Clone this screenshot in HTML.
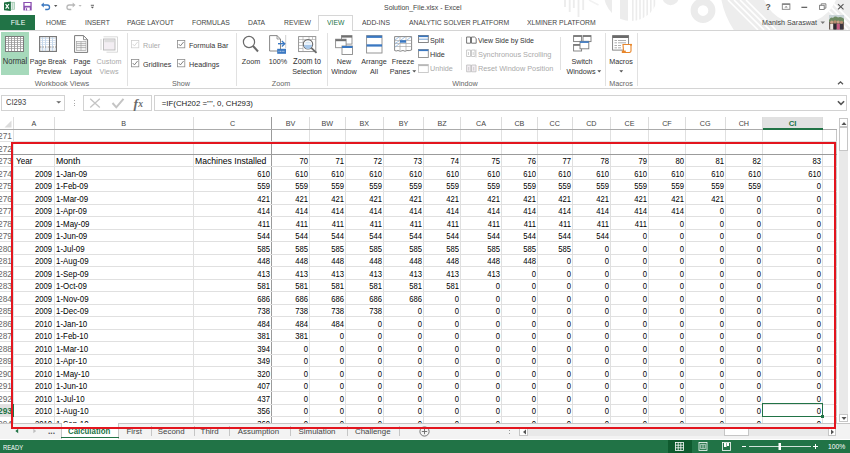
<!DOCTYPE html>
<html><head><meta charset="utf-8"><style>
html,body{margin:0;padding:0;}
body{width:850px;height:453px;position:relative;overflow:hidden;background:#fff;font-family:"Liberation Sans", sans-serif;}
body>div,body>svg{position:absolute;}
</style></head><body>
<svg style="left:0;top:0" width="850" height="30.5" viewBox="0 0 850 30.5">
<g fill="#ececec">
<rect x="564.1" y="0" width="1.8" height="7"/><rect x="568.8" y="0" width="1.8" height="12"/><rect x="572.9" y="0" width="1.8" height="8"/>
<rect x="577.6" y="0" width="1.8" height="17"/><rect x="582.3" y="0" width="1.8" height="10"/>
<circle cx="670.6" cy="-3" r="8.2"/>
</g>
<path d="M589 0 L598.5 5" stroke="#f2f2f2" stroke-width="1.5"/>
<clipPath id="sc"><circle cx="631" cy="-6" r="27"/></clipPath>
<g clip-path="url(#sc)" fill="#ececec">
<rect x="604" y="0" width="8" height="30"/><rect x="620" y="0" width="8" height="30"/>
<rect x="632" y="0" width="1.6" height="30"/><rect x="635.6" y="0" width="1.6" height="30"/><rect x="639.2" y="0" width="1.6" height="30"/><rect x="642.8" y="0" width="1.6" height="30"/><rect x="646.4" y="0" width="1.6" height="30"/><rect x="650" y="0" width="1.6" height="30"/><rect x="653.6" y="0" width="1.6" height="30"/>
</g>
<circle cx="703" cy="10.6" r="8.85" fill="none" stroke="#ebebeb" stroke-width="7.1"/>
<clipPath id="bc"><path d="M880 -15 A80 80 0 1 0 720 -15 A80 80 0 1 0 880 -15 Z M839 -15 A39 39 0 1 1 761 -15 A39 39 0 1 1 839 -15 Z" fill-rule="evenodd"/></clipPath>
<g clip-path="url(#bc)">
<rect x="700" y="0" width="150" height="31" fill="#ededed"/>
<g stroke="#fff" stroke-width="1.6">
<line x1="728" y1="0" x2="758" y2="30"/><line x1="734" y1="0" x2="764" y2="30"/><line x1="740" y1="0" x2="770" y2="30"/><line x1="746" y1="0" x2="776" y2="30"/>
<line x1="818" y1="0" x2="848" y2="30"/><line x1="824" y1="0" x2="854" y2="30"/><line x1="830" y1="0" x2="860" y2="30"/>
</g>
</g>
</svg>
<svg style="left:0;top:0" width="36" height="14" viewBox="0 0 36 14">
<path d="M9.5 1.9 H14.8 V9.7 H9.5 Z" fill="#9cc7ad"/>
<rect x="11.3" y="2.6" width="1" height="6.5" fill="#fff"/><rect x="13.2" y="2.6" width="0.8" height="6.5" fill="#e8f2ec"/>
<path d="M4 2.6 L10.8 1.6 V11.1 L4 10.2 Z" fill="#1d6e3f"/>
<path d="M5.6 4 L8.9 8.6 M8.9 4 L5.6 8.6" stroke="#fff" stroke-width="1.2"/>
<rect x="23.3" y="2" width="8.4" height="8.4" fill="#8a4fb0"/>
<rect x="24.6" y="3" width="5.8" height="2.8" fill="#fff"/>
<rect x="25.2" y="7.5" width="4.6" height="2.9" fill="#fff"/>
<rect x="26" y="8.2" width="1.1" height="2.2" fill="#8a4fb0"/>
</svg>
<svg style="left:0;top:0" width="100" height="14" viewBox="0 0 100 14">
<path d="M43.2 5 H47.3 A2.25 2.25 0 0 1 47.3 9.5 H45.2" fill="none" stroke="#3b78c0" stroke-width="1.3"/>
<path d="M41 5 L43.8 2.6 L43.8 7.4 Z" fill="#3b78c0"/>
<path d="M54 5 H57.4 L55.7 6.9 Z" fill="#555"/>
<path d="M73.3 5 H69.2 A2.25 2.25 0 0 0 69.2 9.5 H71.3" fill="none" stroke="#b8b8b8" stroke-width="1.3"/>
<path d="M75.5 5 L72.7 2.6 L72.7 7.4 Z" fill="#b8b8b8"/>
<path d="M78.5 5 H81.7 L80.1 6.8 Z" fill="#bbb"/>
<rect x="90.8" y="4.8" width="3.2" height="0.9" fill="#555"/><path d="M90.8 6.8 H94 L92.4 8.6 Z" fill="#555"/>
</svg>
<div style="left:384.4px;top:3.6px;font-size:7.5px;line-height:8.4px;color:#444;white-space:pre;transform:scaleX(0.93);transform-origin:0 50%">Solution_File.xlsx - Excel</div>
<svg style="left:760px;top:0" width="90" height="14" viewBox="760 0 90 14">
<text x="765.6" y="9.6" font-family="Liberation Sans" font-weight="bold" font-size="8.6" fill="#555">?</text>
<rect x="782.3" y="3.9" width="7.6" height="5.4" fill="none" stroke="#808080" stroke-width="0.9"/><rect x="782.3" y="3.6" width="7.6" height="1.3" fill="#808080"/>
<path d="M784.4 7.6 L786.1 5.9 L787.8 7.6Z" fill="#808080"/>
<rect x="801.4" y="6.7" width="5.8" height="1.3" fill="#666"/>
<rect x="819.6" y="5.3" width="4.6" height="4.2" fill="none" stroke="#777" stroke-width="0.9"/><path d="M821.2 5.3 V3.8 H825.9 V8.2 H824.2" fill="none" stroke="#777" stroke-width="0.9"/>
<path d="M838 4.2 L843.5 9.4 M843.5 4.2 L838 9.4" stroke="#555" stroke-width="1.1"/>
</svg>
<div style="left:0px;top:15px;width:35px;height:15.5px;background:#217346"></div>
<div style="left:-82.5px;top:14.8px;width:200px;text-align:center;font-size:7.6px;line-height:15.5px;color:#fff;white-space:pre;transform:scaleX(0.9)">FILE</div>
<div style="left:45.6px;top:15.4px;font-size:7.6px;line-height:15px;color:#444;white-space:pre;transform:scaleX(0.895);transform-origin:0 50%">HOME</div>
<div style="left:85.4px;top:15.4px;font-size:7.6px;line-height:15px;color:#444;white-space:pre;transform:scaleX(0.895);transform-origin:0 50%">INSERT</div>
<div style="left:126.6px;top:15.4px;font-size:7.6px;line-height:15px;color:#444;white-space:pre;transform:scaleX(0.895);transform-origin:0 50%">PAGE LAYOUT</div>
<div style="left:191.6px;top:15.4px;font-size:7.6px;line-height:15px;color:#444;white-space:pre;transform:scaleX(0.895);transform-origin:0 50%">FORMULAS</div>
<div style="left:247.8px;top:15.4px;font-size:7.6px;line-height:15px;color:#444;white-space:pre;transform:scaleX(0.895);transform-origin:0 50%">DATA</div>
<div style="left:283.6px;top:15.4px;font-size:7.6px;line-height:15px;color:#444;white-space:pre;transform:scaleX(0.895);transform-origin:0 50%">REVIEW</div>
<div style="left:361.9px;top:15.4px;font-size:7.6px;line-height:15px;color:#444;white-space:pre;transform:scaleX(0.895);transform-origin:0 50%">ADD-INS</div>
<div style="left:408.8px;top:15.4px;font-size:7.6px;line-height:15px;color:#444;white-space:pre;transform:scaleX(0.895);transform-origin:0 50%">ANALYTIC SOLVER PLATFORM</div>
<div style="left:527.4px;top:15.4px;font-size:7.6px;line-height:15px;color:#444;white-space:pre;transform:scaleX(0.895);transform-origin:0 50%">XLMINER PLATFORM</div>
<div style="left:0px;top:30px;width:850px;height:1px;background:#d4d4d4"></div>
<div style="left:318.4px;top:15.2px;width:34.2px;height:15.8px;background:#fff;border:1px solid #d6d6d6;border-bottom:none;box-sizing:border-box"></div>
<div style="left:326.6px;top:15.4px;font-size:7.6px;line-height:15px;color:#217346;white-space:pre;transform:scaleX(0.895);transform-origin:0 50%">VIEW</div>
<div style="left:762px;top:16px;font-size:7.17px;line-height:14px;color:#444;white-space:pre;">Manish Saraswat</div>
<svg style="left:820px;top:21px" width="6" height="4" viewBox="0 0 6 4"><path d="M0.5 0.5H5L2.75 3Z" fill="#777"/></svg>
<svg style="left:828.7px;top:15.1px" width="15.2" height="14.5" viewBox="0 0 15.2 14.5">
<rect width="15.2" height="14.5" fill="#c9d3d6"/>
<path d="M0 5 Q2 1.5 4 3 Q6 0.5 9 2.5 Q12 1 15.2 4 V8 H0Z" fill="#6f8a63"/>
<rect x="0" y="7" width="15.2" height="7.5" fill="#6b5d55"/>
<circle cx="2.8" cy="7.2" r="1.6" fill="#c9a385"/><circle cx="6" cy="6.8" r="1.6" fill="#b98d6e"/><circle cx="9.2" cy="7" r="1.6" fill="#caa083"/><circle cx="12.5" cy="7.3" r="1.5" fill="#b78f72"/>
<rect x="1.2" y="9" width="3" height="5.5" fill="#ece6e2"/><rect x="4.5" y="8.8" width="3" height="5.7" fill="#2d2a30"/><rect x="7.8" y="8.8" width="3" height="5.7" fill="#c85c84"/><rect x="11" y="9" width="3" height="5.5" fill="#3b3540"/>
</svg>
<div style="left:1px;top:32.3px;width:28px;height:43px;background:#a6d9bb"></div>
<svg style="left:5px;top:36px" width="19" height="16" viewBox="0 0 19 16"><rect x="0.5" y="0.5" width="18" height="15" fill="#fff" stroke="#7a7a7a" stroke-width="1"/><line x1="3.5" y1="1" x2="3.5" y2="15" stroke="#8a8a8a" stroke-width="0.8"/><line x1="6.5" y1="1" x2="6.5" y2="15" stroke="#8a8a8a" stroke-width="0.8"/><line x1="9.5" y1="1" x2="9.5" y2="15" stroke="#8a8a8a" stroke-width="0.8"/><line x1="12.5" y1="1" x2="12.5" y2="15" stroke="#8a8a8a" stroke-width="0.8"/><line x1="15.5" y1="1" x2="15.5" y2="15" stroke="#8a8a8a" stroke-width="0.8"/><line x1="1" y1="2.5" x2="18" y2="2.5" stroke="#9a9a9a" stroke-width="0.7"/><line x1="1" y1="4.5" x2="18" y2="4.5" stroke="#9a9a9a" stroke-width="0.7"/><line x1="1" y1="6.5" x2="18" y2="6.5" stroke="#9a9a9a" stroke-width="0.7"/><line x1="1" y1="8.5" x2="18" y2="8.5" stroke="#9a9a9a" stroke-width="0.7"/><line x1="1" y1="10.5" x2="18" y2="10.5" stroke="#9a9a9a" stroke-width="0.7"/><line x1="1" y1="12.5" x2="18" y2="12.5" stroke="#9a9a9a" stroke-width="0.7"/></svg>
<svg style="left:39px;top:36px" width="18" height="16" viewBox="0 0 18 16"><rect x="0.6" y="0.6" width="16.8" height="14.8" fill="#fff" stroke="#7a7a7a" stroke-width="1.2"/><line x1="3.5" y1="1" x2="3.5" y2="15" stroke="#b8d0ea" stroke-width="0.8"/><line x1="6.5" y1="1" x2="6.5" y2="15" stroke="#b8d0ea" stroke-width="0.8"/><line x1="13.5" y1="1" x2="13.5" y2="15" stroke="#b8d0ea" stroke-width="0.8"/><line x1="1" y1="2.5" x2="17" y2="2.5" stroke="#c8d8ea" stroke-width="0.7"/><line x1="1" y1="4.5" x2="17" y2="4.5" stroke="#c8d8ea" stroke-width="0.7"/><line x1="1" y1="6.5" x2="17" y2="6.5" stroke="#c8d8ea" stroke-width="0.7"/><line x1="1" y1="8.5" x2="17" y2="8.5" stroke="#c8d8ea" stroke-width="0.7"/><line x1="1" y1="13" x2="17" y2="13" stroke="#c8d8ea" stroke-width="0.7"/><line x1="10.5" y1="1" x2="10.5" y2="15" stroke="#7a7a7a" stroke-width="1"/><line x1="1" y1="11" x2="17" y2="11" stroke="#7a7a7a" stroke-width="0.8" stroke-dasharray="1.5 1"/></svg>
<svg style="left:73.5px;top:35px" width="15" height="18" viewBox="0 0 15 18">
<path d="M0.6 0.6 H9.5 L13.6 4.7 V17.4 H0.6 Z" fill="#fff" stroke="#7a7a7a" stroke-width="1"/>
<path d="M9.5 0.6 V4.7 H13.6" fill="none" stroke="#7a7a7a" stroke-width="0.8"/>
<rect x="2.5" y="6.5" width="9.5" height="9" fill="#f0f0f0" stroke="#9a9a9a" stroke-width="0.6"/>
<path d="M7 6.5V15.5M2.5 8.5H12M2.5 10.5H12M2.5 12.5H12" stroke="#9a9a9a" stroke-width="0.6"/>
</svg>
<svg style="left:99.5px;top:35.5px" width="19" height="17" viewBox="0 0 19 17">
<rect x="3.5" y="3" width="11.5" height="11" fill="#f3eef3" stroke="#b8b8b8" stroke-width="0.9"/>
<rect x="4.5" y="4" width="9.5" height="2.2" fill="#ddd"/>
<path d="M3.5 0.8 H17.5 M17.5 0.8 V16.2 M6.5 16.2 H17.5 M1 3 V14" stroke="#cfcfcf" stroke-width="0.8" fill="none"/>
</svg>
<svg style="left:242px;top:35px" width="19" height="18" viewBox="0 0 19 18">
<circle cx="7" cy="7" r="5.6" fill="#fff" stroke="#6a6a6a" stroke-width="1.2"/>
<line x1="11" y1="11" x2="16" y2="16.5" stroke="#6a6a6a" stroke-width="2"/>
</svg>
<svg style="left:268.5px;top:35px" width="18" height="19" viewBox="0 0 18 19">
<path d="M0.6 0.6 H8 L11.5 4 V16 H0.6 Z" fill="#fff" stroke="#7a7a7a" stroke-width="0.9"/>
<path d="M8 0.6 V4 H11.5" fill="none" stroke="#7a7a7a" stroke-width="0.7"/>
<line x1="16.7" y1="0.5" x2="16.7" y2="13" stroke="#8a8a8a" stroke-width="0.8" stroke-dasharray="1 1"/>
<line x1="9" y1="8.7" x2="15" y2="8.7" stroke="#3a78c2" stroke-width="1.4"/><path d="M12.8 6 L15.8 8.7 L12.8 11.4" fill="none" stroke="#3a78c2" stroke-width="1.3"/>
<rect x="8.2" y="13.8" width="8.8" height="5" fill="#3a78c2"/>
<path d="M9.5 16.3H16" stroke="#fff" stroke-width="0.7" stroke-dasharray="1 0.6"/>
</svg>
<svg style="left:297.5px;top:36px" width="20" height="18" viewBox="0 0 20 18">
<rect x="0.6" y="0.6" width="17.2" height="15" fill="#fff" stroke="#8a8a8a" stroke-width="0.9"/>
<path d="M0.6 3.5H17.8M0.6 6.5H5M0.6 9.5H5M0.6 12.5H5M5 0.6V15.6M11 0.6V3.5M14.5 0.6V3.5" stroke="#a0a0a0" stroke-width="0.6"/>
<circle cx="10" cy="8.3" r="4.7" fill="#fff" stroke="#6a6a6a" stroke-width="1.1"/>
<path d="M5.8 8.8 A4.2 4.2 0 0 0 14.2 8.8 Z" fill="#a8c8ea"/>
<path d="M6.5 7.5 A4 4 0 0 1 13.5 7.5 Z" fill="#d6e6f4"/>
<line x1="13.3" y1="11.8" x2="18.5" y2="16.8" stroke="#6a6a6a" stroke-width="1.8"/>
</svg>
<svg style="left:335px;top:34.5px" width="19" height="20" viewBox="0 0 19 20">
<rect x="6.5" y="0.6" width="10.5" height="8.5" fill="#fff" stroke="#8a8a8a" stroke-width="0.9"/><rect x="6.5" y="0.6" width="10.5" height="2" fill="#707070"/>
<rect x="0.6" y="4.2" width="10.5" height="8.5" fill="#fff" stroke="#8a8a8a" stroke-width="0.9"/><rect x="0.6" y="4.2" width="10.5" height="2" fill="#707070"/>
<rect x="7" y="11" width="10.5" height="8.5" fill="#fff" stroke="#8a8a8a" stroke-width="0.9"/><rect x="7" y="11" width="10.5" height="2" fill="#3a78c2"/>
</svg>
<svg style="left:366px;top:34.5px" width="17" height="19" viewBox="0 0 17 19">
<rect x="0.6" y="0.6" width="15.4" height="17.4" fill="#fff" stroke="#8a8a8a" stroke-width="0.9"/>
<rect x="0.6" y="0.6" width="15.4" height="2.3" fill="#3a78c2"/>
<rect x="0.6" y="9.3" width="15.4" height="2.3" fill="#3a78c2"/>
</svg>
<svg style="left:394px;top:36px" width="19" height="17" viewBox="0 0 19 17">
<path d="M0.6 0.6 H17.6 V14 Q15 15 13 14.5 Q11 16 9 14.5 Q6 16 4 14.5 Q2 15.5 0.6 14.5 Z" fill="#fff" stroke="#7a7a7a" stroke-width="0.9"/>
<path d="M0.6 4.5H17.6M0.6 7.5H17.6M0.6 10.5H17.6M6 0.6V14.5M12 0.6V14.5" stroke="#9a9a9a" stroke-width="0.6"/>
<rect x="6" y="4.2" width="6" height="2.5" fill="#3a78c2"/>
<path d="M1 4 L5 1 M7 4 L11 1 M13 4 L17 1 M1 7.5 L5 5 M1 11 L5 8" stroke="#8ab4e0" stroke-width="0.8"/>
</svg>
<svg style="left:418px;top:35px" width="11" height="8" viewBox="0 0 11 8">
<rect x="0.5" y="0.5" width="9.8" height="7" fill="#fff" stroke="#7a7a7a" stroke-width="0.9"/><rect x="0.5" y="0.5" width="9.8" height="1.6" fill="#3a78c2"/><line x1="1" y1="4.2" x2="10" y2="4.2" stroke="#3a78c2" stroke-width="0.7"/>
</svg>
<svg style="left:418px;top:49px" width="11" height="9" viewBox="0 0 11 9">
<rect x="0.5" y="0.5" width="9.8" height="8" fill="#fff" stroke="#8a8a8a" stroke-width="0.9"/><rect x="0.5" y="0.5" width="9.8" height="1.6" fill="#3a78c2"/>
</svg>
<svg style="left:418px;top:64px" width="11" height="9" viewBox="0 0 11 9">
<rect x="0.5" y="0.5" width="9.8" height="8" fill="#fff" stroke="#c6c6c6" stroke-width="0.9"/><rect x="0.5" y="0.5" width="9.8" height="1.6" fill="#b8b8b8"/>
</svg>
<svg style="left:465.5px;top:35.5px" width="11" height="8" viewBox="0 0 11 8">
<path d="M0.6 1 H4.5 V7.2 H0.6 Z M5.5 1 H8.5 L10.2 2.5 V7.2 H5.5 Z" fill="#fff" stroke="#666" stroke-width="0.9"/>
</svg>
<svg style="left:465.5px;top:49px" width="11" height="9" viewBox="0 0 11 9">
<path d="M0.6 1 H4.5 V7.5 H0.6 Z M5.5 1 H9 V7.5 H5.5 Z" fill="#fff" stroke="#bcbcbc" stroke-width="0.8"/><path d="M10 0.5V8.5M2.5 3V6M7.2 3V6" stroke="#bcbcbc" stroke-width="0.7"/>
</svg>
<svg style="left:465.5px;top:63.5px" width="11" height="9" viewBox="0 0 11 9">
<path d="M0.6 1 H4.8 V7.8 H0.6 Z M5.5 1 H10 V7.8 H5.5 Z" fill="#f3eef3" stroke="#bcbcbc" stroke-width="0.8"/><path d="M2.7 3V6.5M7.7 3V6.5" stroke="#bcbcbc" stroke-width="0.7"/>
</svg>
<svg style="left:573px;top:35px" width="19" height="17" viewBox="0 0 19 17">
<rect x="0.6" y="0.6" width="8" height="6" fill="#fff" stroke="#7a7a7a" stroke-width="0.9"/><rect x="0.6" y="0.6" width="8" height="1.3" fill="#707070"/>
<rect x="10" y="0.6" width="8" height="6" fill="#fff" stroke="#7a7a7a" stroke-width="0.9"/><rect x="10" y="0.6" width="8" height="1.3" fill="#707070"/>
<rect x="0.6" y="9.5" width="8" height="6.5" fill="#fff" stroke="#7a7a7a" stroke-width="0.9"/><rect x="0.6" y="9.5" width="8" height="1.3" fill="#707070"/>
<rect x="7" y="6.3" width="8.8" height="7.5" fill="#fff" stroke="#7a7a7a" stroke-width="0.9"/><rect x="7" y="6.3" width="8.8" height="1.6" fill="#3a78c2"/>
</svg>
<svg style="left:611.5px;top:35px" width="21" height="18" viewBox="0 0 21 18">
<rect x="0.6" y="0.6" width="16" height="14.5" fill="#fff" stroke="#7a7a7a" stroke-width="0.9"/><rect x="0.6" y="0.6" width="16" height="2.4" fill="#6a6a6a"/>
<path d="M2.5 5.5H5M6 5.5H14M2.5 7.8H5M6 7.8H14M2.5 10.5H5M6 10.5H9M2.5 12.8H5M6 12.8H9" stroke="#9a9a9a" stroke-width="0.8"/>
<path d="M11 9.5 H19 V16 Q19 17.5 17 17.5 H10 Q11.5 17 11.5 16 Z" fill="#fff" stroke="#e8862a" stroke-width="1.1"/>
<rect x="9.8" y="15.6" width="4" height="2" fill="#e8862a"/><circle cx="19" cy="9.7" r="1" fill="#e8862a"/>
</svg>
<div style="left:0px;top:88px;width:850px;height:1px;background:#d4d4d4"></div>
<div style="left:126.5px;top:33px;width:1px;height:53px;background:#e1e1e1"></div>
<div style="left:235.6px;top:33px;width:1px;height:53px;background:#e1e1e1"></div>
<div style="left:326.7px;top:33px;width:1px;height:53px;background:#e1e1e1"></div>
<div style="left:605.2px;top:33px;width:1px;height:53px;background:#e1e1e1"></div>
<div style="left:637px;top:33px;width:1px;height:53px;background:#e1e1e1"></div>
<div style="left:461px;top:37px;width:1px;height:33px;background:#e1e1e1"></div>
<div style="left:560.4px;top:37px;width:1px;height:33px;background:#e1e1e1"></div>
<div style="left:-85.5px;top:56.7px;width:200px;text-align:center;font-size:8.208px;line-height:10px;color:#333;white-space:pre;transform:scaleX(0.926)">Normal</div>
<div style="left:-52.0px;top:56.7px;width:200px;text-align:center;font-size:7.506000000000001px;line-height:10px;color:#333;white-space:pre;transform:scaleX(0.926)">Page Break</div>
<div style="left:-51.5px;top:66.7px;width:200px;text-align:center;font-size:7.506000000000001px;line-height:10px;color:#333;white-space:pre;transform:scaleX(0.926)">Preview</div>
<div style="left:-18.5px;top:56.7px;width:200px;text-align:center;font-size:7.776000000000001px;line-height:10px;color:#333;white-space:pre;transform:scaleX(0.926)">Page</div>
<div style="left:-19.0px;top:66.7px;width:200px;text-align:center;font-size:7.776000000000001px;line-height:10px;color:#333;white-space:pre;transform:scaleX(0.926)">Layout</div>
<div style="left:8.5px;top:56.7px;width:200px;text-align:center;font-size:7.776000000000001px;line-height:10px;color:#aaa;white-space:pre;transform:scaleX(0.926)">Custom</div>
<div style="left:8.5px;top:66.7px;width:200px;text-align:center;font-size:7.776000000000001px;line-height:10px;color:#aaa;white-space:pre;transform:scaleX(0.926)">Views</div>
<div style="left:-38.3px;top:78.89999999999999px;width:200px;text-align:center;font-size:7.959600000000001px;line-height:10px;color:#666;white-space:pre;transform:scaleX(0.926)">Workbook Views</div>
<div style="left:142.6px;top:40.5px;font-size:7.74px;line-height:10px;color:#aaa;white-space:pre;transform:scaleX(0.926);transform-origin:0 50%">Ruler</div>
<div style="left:188.6px;top:40.5px;font-size:7.73px;line-height:10px;color:#333;white-space:pre;transform:scaleX(0.926);transform-origin:0 50%">Formula Bar</div>
<div style="left:142.6px;top:59.6px;font-size:7.74px;line-height:10px;color:#333;white-space:pre;transform:scaleX(0.926);transform-origin:0 50%">Gridlines</div>
<div style="left:188.6px;top:59.6px;font-size:7.74px;line-height:10px;color:#333;white-space:pre;transform:scaleX(0.926);transform-origin:0 50%">Headings</div>
<div style="left:80.80000000000001px;top:78.89999999999999px;width:200px;text-align:center;font-size:7.776000000000001px;line-height:10px;color:#666;white-space:pre;transform:scaleX(0.926)">Show</div>
<svg style="left:131px;top:40.2px" width="9" height="9" viewBox="0 0 9 9"><rect x="0.4" y="0.4" width="7.4" height="7.4" fill="#fff" stroke="#cfcfcf" stroke-width="0.8"/><path d="M1.7 4 L3.4 5.9 L6.6 2" fill="none" stroke="#cfcfcf" stroke-width="0.8"/></svg>
<svg style="left:177.3px;top:40.2px" width="9" height="9" viewBox="0 0 9 9"><rect x="0.4" y="0.4" width="7.4" height="7.4" fill="#fff" stroke="#8c8c8c" stroke-width="0.8"/><path d="M1.7 4 L3.4 5.9 L6.6 2" fill="none" stroke="#666" stroke-width="0.8"/></svg>
<svg style="left:131px;top:59.4px" width="9" height="9" viewBox="0 0 9 9"><rect x="0.4" y="0.4" width="7.4" height="7.4" fill="#fff" stroke="#8c8c8c" stroke-width="0.8"/><path d="M1.7 4 L3.4 5.9 L6.6 2" fill="none" stroke="#666" stroke-width="0.8"/></svg>
<svg style="left:177.3px;top:59.4px" width="9" height="9" viewBox="0 0 9 9"><rect x="0.4" y="0.4" width="7.4" height="7.4" fill="#fff" stroke="#8c8c8c" stroke-width="0.8"/><path d="M1.7 4 L3.4 5.9 L6.6 2" fill="none" stroke="#666" stroke-width="0.8"/></svg>
<div style="left:151.3px;top:56.7px;width:200px;text-align:center;font-size:7.776000000000001px;line-height:10px;color:#333;white-space:pre;transform:scaleX(0.926)">Zoom</div>
<div style="left:177.7px;top:56.7px;width:200px;text-align:center;font-size:7.776000000000001px;line-height:10px;color:#333;white-space:pre;transform:scaleX(0.926)">100%</div>
<div style="left:206.7px;top:56.7px;width:200px;text-align:center;font-size:8.208px;line-height:10px;color:#333;white-space:pre;transform:scaleX(0.926)">Zoom to</div>
<div style="left:206.7px;top:66.7px;width:200px;text-align:center;font-size:7.776000000000001px;line-height:10px;color:#333;white-space:pre;transform:scaleX(0.926)">Selection</div>
<div style="left:180.8px;top:78.89999999999999px;width:200px;text-align:center;font-size:7.776000000000001px;line-height:10px;color:#666;white-space:pre;transform:scaleX(0.926)">Zoom</div>
<div style="left:244.39999999999998px;top:56.7px;width:200px;text-align:center;font-size:7.776000000000001px;line-height:10px;color:#333;white-space:pre;transform:scaleX(0.926)">New</div>
<div style="left:244.2px;top:66.7px;width:200px;text-align:center;font-size:7.776000000000001px;line-height:10px;color:#333;white-space:pre;transform:scaleX(0.926)">Window</div>
<div style="left:274.0px;top:56.7px;width:200px;text-align:center;font-size:7.776000000000001px;line-height:10px;color:#333;white-space:pre;transform:scaleX(0.926)">Arrange</div>
<div style="left:274.2px;top:66.7px;width:200px;text-align:center;font-size:7.776000000000001px;line-height:10px;color:#333;white-space:pre;transform:scaleX(0.926)">All</div>
<div style="left:302.7px;top:56.7px;width:200px;text-align:center;font-size:7.776000000000001px;line-height:10px;color:#333;white-space:pre;transform:scaleX(0.926)">Freeze</div>
<div style="left:300.1px;top:66.7px;width:200px;text-align:center;font-size:7.776000000000001px;line-height:10px;color:#333;white-space:pre;transform:scaleX(0.926)">Panes</div>
<svg style="left:411.5px;top:70px" width="5" height="3" viewBox="0 0 5 3"><path d="M0.3 0.3H4.2L2.25 2.5Z" fill="#555"/></svg>
<div style="left:430.3px;top:36.1px;font-size:7.78px;line-height:10px;color:#333;white-space:pre;transform:scaleX(0.926);transform-origin:0 50%">Split</div>
<div style="left:430.3px;top:50.1px;font-size:7.78px;line-height:10px;color:#333;white-space:pre;transform:scaleX(0.926);transform-origin:0 50%">Hide</div>
<div style="left:430.3px;top:64.1px;font-size:7.78px;line-height:10px;color:#aaa;white-space:pre;transform:scaleX(0.926);transform-origin:0 50%">Unhide</div>
<div style="left:477.9px;top:36.1px;font-size:7.52px;line-height:10px;color:#333;white-space:pre;transform:scaleX(0.926);transform-origin:0 50%">View Side by Side</div>
<div style="left:477.9px;top:50.1px;font-size:7.97px;line-height:10px;color:#aaa;white-space:pre;transform:scaleX(0.926);transform-origin:0 50%">Synchronous Scrolling</div>
<div style="left:477.9px;top:64.1px;font-size:7.91px;line-height:10px;color:#aaa;white-space:pre;transform:scaleX(0.926);transform-origin:0 50%">Reset Window Position</div>
<div style="left:365.4px;top:78.89999999999999px;width:200px;text-align:center;font-size:7.776000000000001px;line-height:10px;color:#666;white-space:pre;transform:scaleX(0.926)">Window</div>
<div style="left:482.0px;top:56.7px;width:200px;text-align:center;font-size:7.776000000000001px;line-height:10px;color:#333;white-space:pre;transform:scaleX(0.926)">Switch</div>
<div style="left:480.5px;top:66.7px;width:200px;text-align:center;font-size:7.776000000000001px;line-height:10px;color:#333;white-space:pre;transform:scaleX(0.926)">Windows</div>
<svg style="left:596.5px;top:70px" width="5" height="3" viewBox="0 0 5 3"><path d="M0.3 0.3H4.2L2.25 2.5Z" fill="#555"/></svg>
<div style="left:521.2px;top:56.7px;width:200px;text-align:center;font-size:7.776000000000001px;line-height:10px;color:#333;white-space:pre;transform:scaleX(0.926)">Macros</div>
<svg style="left:618.5px;top:70px" width="5" height="3" viewBox="0 0 5 3"><path d="M0.3 0.3H4.2L2.25 2.5Z" fill="#555"/></svg>
<div style="left:521.0px;top:78.89999999999999px;width:200px;text-align:center;font-size:7.776000000000001px;line-height:10px;color:#666;white-space:pre;transform:scaleX(0.926)">Macros</div>
<svg style="left:837px;top:81px" width="7" height="4" viewBox="0 0 7 4"><path d="M1 3.3 L3.5 0.9 L6 3.3" fill="none" stroke="#555" stroke-width="1.3"/></svg>
<div style="left:1.0px;top:95.2px;width:64px;height:15.4px;border:1px solid #d2d2d2;box-sizing:border-box;background:#fff"></div>
<div style="left:5.6px;top:97.3px;font-size:8.2px;line-height:12px;color:#444;white-space:pre;transform:scaleX(0.93);transform-origin:0 50%">CI293</div>
<svg style="left:56px;top:101px" width="6" height="4" viewBox="0 0 6 4"><path d="M0.2 0.2H5.2L2.7 2.6Z" fill="#666"/></svg>
<div style="left:74px;top:100px;width:0.9px;height:1px;background:#aaa"></div>
<div style="left:74px;top:102.5px;width:0.9px;height:1px;background:#aaa"></div>
<div style="left:74px;top:105px;width:0.9px;height:1px;background:#aaa"></div>
<div style="left:83.4px;top:95.2px;width:68.4px;height:15.4px;border:1px solid #d2d2d2;box-sizing:border-box;background:#fff"></div>
<svg style="left:88px;top:95px" width="62" height="16" viewBox="0 0 62 16">
<path d="M2.2 3.8 L11.8 12.6 M11.8 3.8 L2.2 12.6" stroke="#c4c4c4" stroke-width="1.3"/>
<path d="M24.5 8 L28.3 12.3 L35.5 3.8" fill="none" stroke="#c4c4c4" stroke-width="2"/>
<text x="45.5" y="12.6" font-family="Liberation Serif" font-style="italic" font-weight="bold" font-size="13.5" fill="#6a6a6a">f</text>
<text x="50.3" y="12.4" font-family="Liberation Serif" font-style="italic" font-weight="bold" font-size="9.5" fill="#6a6a6a">x</text>
</svg>
<div style="left:154.4px;top:95.2px;width:692.3px;height:15.4px;border:1px solid #d2d2d2;box-sizing:border-box;background:#fff"></div>
<div style="left:161.7px;top:97.8px;font-size:7.87px;line-height:12px;color:#222;white-space:pre;">=IF(CH202 ="", 0, CH293)</div>
<svg style="left:837px;top:100px" width="8" height="6" viewBox="0 0 8 6"><path d="M0.9 1.3 L4 4.4 L7.1 1.3" fill="none" stroke="#555" stroke-width="1.6"/></svg>
<div style="left:0px;top:117.3px;width:836.7px;height:12.100000000000009px;background:#fff"></div>
<div style="left:762.6px;top:117.3px;width:60.10000000000002px;height:12.100000000000009px;background:#e1e1e1"></div>
<svg style="left:4px;top:120px" width="8" height="8" viewBox="0 0 8 8"><path d="M7.5 0.5 V7.5 H0.5 Z" fill="#dcdcdc"/></svg>
<div style="left:13.1px;top:117.3px;width:1px;height:12.100000000000009px;background:#dcdcdc"></div>
<div style="left:13.1px;top:129.4px;width:1px;height:293.29999999999995px;background:#e0e0e0"></div>
<div style="left:53.5px;top:117.3px;width:1px;height:12.100000000000009px;background:#dcdcdc"></div>
<div style="left:53.5px;top:129.4px;width:1px;height:293.29999999999995px;background:#e0e0e0"></div>
<div style="left:193.0px;top:117.3px;width:1px;height:12.100000000000009px;background:#dcdcdc"></div>
<div style="left:193.0px;top:129.4px;width:1px;height:293.29999999999995px;background:#e0e0e0"></div>
<div style="left:271.0px;top:117.3px;width:1px;height:12.100000000000009px;background:#dcdcdc"></div>
<div style="left:271.0px;top:129.4px;width:1px;height:293.29999999999995px;background:#e0e0e0"></div>
<div style="left:308.9px;top:117.3px;width:1px;height:12.100000000000009px;background:#dcdcdc"></div>
<div style="left:308.9px;top:129.4px;width:1px;height:293.29999999999995px;background:#e0e0e0"></div>
<div style="left:344.7px;top:117.3px;width:1px;height:12.100000000000009px;background:#dcdcdc"></div>
<div style="left:344.7px;top:129.4px;width:1px;height:293.29999999999995px;background:#e0e0e0"></div>
<div style="left:382.9px;top:117.3px;width:1px;height:12.100000000000009px;background:#dcdcdc"></div>
<div style="left:382.9px;top:129.4px;width:1px;height:293.29999999999995px;background:#e0e0e0"></div>
<div style="left:423.0px;top:117.3px;width:1px;height:12.100000000000009px;background:#dcdcdc"></div>
<div style="left:423.0px;top:129.4px;width:1px;height:293.29999999999995px;background:#e0e0e0"></div>
<div style="left:460.0px;top:117.3px;width:1px;height:12.100000000000009px;background:#dcdcdc"></div>
<div style="left:460.0px;top:129.4px;width:1px;height:293.29999999999995px;background:#e0e0e0"></div>
<div style="left:501.0px;top:117.3px;width:1px;height:12.100000000000009px;background:#dcdcdc"></div>
<div style="left:501.0px;top:129.4px;width:1px;height:293.29999999999995px;background:#e0e0e0"></div>
<div style="left:536.8px;top:117.3px;width:1px;height:12.100000000000009px;background:#dcdcdc"></div>
<div style="left:536.8px;top:129.4px;width:1px;height:293.29999999999995px;background:#e0e0e0"></div>
<div style="left:571.8px;top:117.3px;width:1px;height:12.100000000000009px;background:#dcdcdc"></div>
<div style="left:571.8px;top:129.4px;width:1px;height:293.29999999999995px;background:#e0e0e0"></div>
<div style="left:609.9px;top:117.3px;width:1px;height:12.100000000000009px;background:#dcdcdc"></div>
<div style="left:609.9px;top:129.4px;width:1px;height:293.29999999999995px;background:#e0e0e0"></div>
<div style="left:648.0px;top:117.3px;width:1px;height:12.100000000000009px;background:#dcdcdc"></div>
<div style="left:648.0px;top:129.4px;width:1px;height:293.29999999999995px;background:#e0e0e0"></div>
<div style="left:684.9px;top:117.3px;width:1px;height:12.100000000000009px;background:#dcdcdc"></div>
<div style="left:684.9px;top:129.4px;width:1px;height:293.29999999999995px;background:#e0e0e0"></div>
<div style="left:724.6px;top:117.3px;width:1px;height:12.100000000000009px;background:#dcdcdc"></div>
<div style="left:724.6px;top:129.4px;width:1px;height:293.29999999999995px;background:#e0e0e0"></div>
<div style="left:762.1px;top:117.3px;width:1px;height:12.100000000000009px;background:#dcdcdc"></div>
<div style="left:762.1px;top:129.4px;width:1px;height:293.29999999999995px;background:#e0e0e0"></div>
<div style="left:822.2px;top:117.3px;width:1px;height:12.100000000000009px;background:#dcdcdc"></div>
<div style="left:822.2px;top:129.4px;width:1px;height:293.29999999999995px;background:#e0e0e0"></div>
<div style="left:271.0px;top:117.3px;width:1px;height:305.4px;background:#9b9b9b"></div>
<div style="left:836.2px;top:129.4px;width:1px;height:293.29999999999995px;background:#c6c6c6"></div>
<div style="left:0px;top:128.9px;width:836.7px;height:1px;background:#ababab"></div>
<div style="left:762.6px;top:128.0px;width:60.10000000000002px;height:1.9px;background:#217346"></div>
<div style="left:-66.2px;top:117.8px;width:200px;text-align:center;font-size:7.2px;line-height:12px;color:#444;white-space:pre;">A</div>
<div style="left:23.75px;top:117.8px;width:200px;text-align:center;font-size:7.2px;line-height:12px;color:#444;white-space:pre;">B</div>
<div style="left:132.5px;top:117.8px;width:200px;text-align:center;font-size:7.2px;line-height:12px;color:#444;white-space:pre;">C</div>
<div style="left:190.45px;top:117.8px;width:200px;text-align:center;font-size:7.2px;line-height:12px;color:#444;white-space:pre;">BV</div>
<div style="left:227.29999999999995px;top:117.8px;width:200px;text-align:center;font-size:7.2px;line-height:12px;color:#444;white-space:pre;">BW</div>
<div style="left:264.29999999999995px;top:117.8px;width:200px;text-align:center;font-size:7.2px;line-height:12px;color:#444;white-space:pre;">BX</div>
<div style="left:303.45px;top:117.8px;width:200px;text-align:center;font-size:7.2px;line-height:12px;color:#444;white-space:pre;">BY</div>
<div style="left:342.0px;top:117.8px;width:200px;text-align:center;font-size:7.2px;line-height:12px;color:#444;white-space:pre;">BZ</div>
<div style="left:381.0px;top:117.8px;width:200px;text-align:center;font-size:7.2px;line-height:12px;color:#444;white-space:pre;">CA</div>
<div style="left:419.4px;top:117.8px;width:200px;text-align:center;font-size:7.2px;line-height:12px;color:#444;white-space:pre;">CB</div>
<div style="left:454.79999999999995px;top:117.8px;width:200px;text-align:center;font-size:7.2px;line-height:12px;color:#444;white-space:pre;">CC</div>
<div style="left:491.3499999999999px;top:117.8px;width:200px;text-align:center;font-size:7.2px;line-height:12px;color:#444;white-space:pre;">CD</div>
<div style="left:529.45px;top:117.8px;width:200px;text-align:center;font-size:7.2px;line-height:12px;color:#444;white-space:pre;">CE</div>
<div style="left:566.95px;top:117.8px;width:200px;text-align:center;font-size:7.2px;line-height:12px;color:#444;white-space:pre;">CF</div>
<div style="left:605.25px;top:117.8px;width:200px;text-align:center;font-size:7.2px;line-height:12px;color:#444;white-space:pre;">CG</div>
<div style="left:643.85px;top:117.8px;width:200px;text-align:center;font-size:7.2px;line-height:12px;color:#444;white-space:pre;">CH</div>
<div style="left:692.6500000000001px;top:117.8px;width:200px;text-align:center;font-size:7.8px;line-height:12px;color:#217346;white-space:pre;font-weight:bold">CI</div>
<div style="left:0px;top:141.4px;width:836.7px;height:1px;background:#e0e0e0"></div>
<div style="left:-188px;top:130.20000000000002px;width:200px;text-align:right;font-size:8.4px;line-height:12px;color:#666;white-space:pre;">271</div>
<div style="left:0px;top:153.9px;width:836.7px;height:1px;background:#9b9b9b"></div>
<div style="left:-188px;top:142.70000000000002px;width:200px;text-align:right;font-size:8.4px;line-height:12px;color:#666;white-space:pre;">272</div>
<div style="left:0px;top:166.4px;width:836.7px;height:1px;background:#e0e0e0"></div>
<div style="left:-188px;top:155.20000000000002px;width:200px;text-align:right;font-size:8.4px;line-height:12px;color:#666;white-space:pre;">273</div>
<div style="left:0px;top:178.9px;width:836.7px;height:1px;background:#e0e0e0"></div>
<div style="left:-188px;top:167.70000000000002px;width:200px;text-align:right;font-size:8.4px;line-height:12px;color:#666;white-space:pre;">274</div>
<div style="left:0px;top:191.4px;width:836.7px;height:1px;background:#e0e0e0"></div>
<div style="left:-188px;top:180.20000000000002px;width:200px;text-align:right;font-size:8.4px;line-height:12px;color:#666;white-space:pre;">275</div>
<div style="left:0px;top:203.9px;width:836.7px;height:1px;background:#e0e0e0"></div>
<div style="left:-188px;top:192.70000000000002px;width:200px;text-align:right;font-size:8.4px;line-height:12px;color:#666;white-space:pre;">276</div>
<div style="left:0px;top:216.4px;width:836.7px;height:1px;background:#e0e0e0"></div>
<div style="left:-188px;top:205.20000000000002px;width:200px;text-align:right;font-size:8.4px;line-height:12px;color:#666;white-space:pre;">277</div>
<div style="left:0px;top:228.9px;width:836.7px;height:1px;background:#e0e0e0"></div>
<div style="left:-188px;top:217.70000000000002px;width:200px;text-align:right;font-size:8.4px;line-height:12px;color:#666;white-space:pre;">278</div>
<div style="left:0px;top:241.4px;width:836.7px;height:1px;background:#e0e0e0"></div>
<div style="left:-188px;top:230.20000000000002px;width:200px;text-align:right;font-size:8.4px;line-height:12px;color:#666;white-space:pre;">279</div>
<div style="left:0px;top:253.9px;width:836.7px;height:1px;background:#e0e0e0"></div>
<div style="left:-188px;top:242.70000000000002px;width:200px;text-align:right;font-size:8.4px;line-height:12px;color:#666;white-space:pre;">280</div>
<div style="left:0px;top:266.4px;width:836.7px;height:1px;background:#e0e0e0"></div>
<div style="left:-188px;top:255.20000000000002px;width:200px;text-align:right;font-size:8.4px;line-height:12px;color:#666;white-space:pre;">281</div>
<div style="left:0px;top:278.9px;width:836.7px;height:1px;background:#e0e0e0"></div>
<div style="left:-188px;top:267.7px;width:200px;text-align:right;font-size:8.4px;line-height:12px;color:#666;white-space:pre;">282</div>
<div style="left:0px;top:291.4px;width:836.7px;height:1px;background:#e0e0e0"></div>
<div style="left:-188px;top:280.2px;width:200px;text-align:right;font-size:8.4px;line-height:12px;color:#666;white-space:pre;">283</div>
<div style="left:0px;top:303.9px;width:836.7px;height:1px;background:#e0e0e0"></div>
<div style="left:-188px;top:292.7px;width:200px;text-align:right;font-size:8.4px;line-height:12px;color:#666;white-space:pre;">284</div>
<div style="left:0px;top:316.4px;width:836.7px;height:1px;background:#e0e0e0"></div>
<div style="left:-188px;top:305.2px;width:200px;text-align:right;font-size:8.4px;line-height:12px;color:#666;white-space:pre;">285</div>
<div style="left:0px;top:328.9px;width:836.7px;height:1px;background:#e0e0e0"></div>
<div style="left:-188px;top:317.7px;width:200px;text-align:right;font-size:8.4px;line-height:12px;color:#666;white-space:pre;">286</div>
<div style="left:0px;top:341.4px;width:836.7px;height:1px;background:#e0e0e0"></div>
<div style="left:-188px;top:330.2px;width:200px;text-align:right;font-size:8.4px;line-height:12px;color:#666;white-space:pre;">287</div>
<div style="left:0px;top:353.9px;width:836.7px;height:1px;background:#e0e0e0"></div>
<div style="left:-188px;top:342.7px;width:200px;text-align:right;font-size:8.4px;line-height:12px;color:#666;white-space:pre;">288</div>
<div style="left:0px;top:366.4px;width:836.7px;height:1px;background:#e0e0e0"></div>
<div style="left:-188px;top:355.2px;width:200px;text-align:right;font-size:8.4px;line-height:12px;color:#666;white-space:pre;">289</div>
<div style="left:0px;top:378.9px;width:836.7px;height:1px;background:#e0e0e0"></div>
<div style="left:-188px;top:367.7px;width:200px;text-align:right;font-size:8.4px;line-height:12px;color:#666;white-space:pre;">290</div>
<div style="left:0px;top:391.4px;width:836.7px;height:1px;background:#e0e0e0"></div>
<div style="left:-188px;top:380.2px;width:200px;text-align:right;font-size:8.4px;line-height:12px;color:#666;white-space:pre;">291</div>
<div style="left:0px;top:403.9px;width:836.7px;height:1px;background:#e0e0e0"></div>
<div style="left:-188px;top:392.7px;width:200px;text-align:right;font-size:8.4px;line-height:12px;color:#666;white-space:pre;">292</div>
<div style="left:0px;top:416.4px;width:836.7px;height:1px;background:#e0e0e0"></div>
<div style="left:0px;top:404.4px;width:13.6px;height:12.5px;background:#e1e1e1"></div>
<div style="left:12.1px;top:404.4px;width:1.6px;height:12.5px;background:#217346"></div>
<div style="left:-188px;top:405.2px;width:200px;text-align:right;font-size:8.4px;line-height:12px;color:#217346;white-space:pre;font-weight:bold">293</div>
<div style="left:-188px;top:417.7px;width:200px;text-align:right;font-size:8.4px;line-height:12px;color:#666;white-space:pre;">294</div>
<div style="left:15.8px;top:155.3px;font-size:8.8px;line-height:12px;color:#000;white-space:pre;transform:scaleX(0.92);transform-origin:0 50%">Year</div>
<div style="left:55.9px;top:155.3px;font-size:8.8px;line-height:12px;color:#000;white-space:pre;transform:scaleX(1.0);transform-origin:0 50%">Month</div>
<div style="left:195.4px;top:155.3px;font-size:8.8px;line-height:12px;color:#000;white-space:pre;transform:scaleX(0.98);transform-origin:0 50%">Machines Installed</div>
<div style="left:107.89999999999998px;top:155.3px;width:200px;text-align:right;font-size:8.8px;line-height:12px;color:#000;white-space:pre;transform:scaleX(0.87);transform-origin:100% 50%">70</div>
<div style="left:143.7px;top:155.3px;width:200px;text-align:right;font-size:8.8px;line-height:12px;color:#000;white-space:pre;transform:scaleX(0.87);transform-origin:100% 50%">71</div>
<div style="left:181.89999999999998px;top:155.3px;width:200px;text-align:right;font-size:8.8px;line-height:12px;color:#000;white-space:pre;transform:scaleX(0.87);transform-origin:100% 50%">72</div>
<div style="left:222.0px;top:155.3px;width:200px;text-align:right;font-size:8.8px;line-height:12px;color:#000;white-space:pre;transform:scaleX(0.87);transform-origin:100% 50%">73</div>
<div style="left:259.0px;top:155.3px;width:200px;text-align:right;font-size:8.8px;line-height:12px;color:#000;white-space:pre;transform:scaleX(0.87);transform-origin:100% 50%">74</div>
<div style="left:300.0px;top:155.3px;width:200px;text-align:right;font-size:8.8px;line-height:12px;color:#000;white-space:pre;transform:scaleX(0.87);transform-origin:100% 50%">75</div>
<div style="left:335.79999999999995px;top:155.3px;width:200px;text-align:right;font-size:8.8px;line-height:12px;color:#000;white-space:pre;transform:scaleX(0.87);transform-origin:100% 50%">76</div>
<div style="left:370.79999999999995px;top:155.3px;width:200px;text-align:right;font-size:8.8px;line-height:12px;color:#000;white-space:pre;transform:scaleX(0.87);transform-origin:100% 50%">77</div>
<div style="left:408.9px;top:155.3px;width:200px;text-align:right;font-size:8.8px;line-height:12px;color:#000;white-space:pre;transform:scaleX(0.87);transform-origin:100% 50%">78</div>
<div style="left:447.0px;top:155.3px;width:200px;text-align:right;font-size:8.8px;line-height:12px;color:#000;white-space:pre;transform:scaleX(0.87);transform-origin:100% 50%">79</div>
<div style="left:483.9px;top:155.3px;width:200px;text-align:right;font-size:8.8px;line-height:12px;color:#000;white-space:pre;transform:scaleX(0.87);transform-origin:100% 50%">80</div>
<div style="left:523.6px;top:155.3px;width:200px;text-align:right;font-size:8.8px;line-height:12px;color:#000;white-space:pre;transform:scaleX(0.87);transform-origin:100% 50%">81</div>
<div style="left:561.1px;top:155.3px;width:200px;text-align:right;font-size:8.8px;line-height:12px;color:#000;white-space:pre;transform:scaleX(0.87);transform-origin:100% 50%">82</div>
<div style="left:621.2px;top:155.3px;width:200px;text-align:right;font-size:8.8px;line-height:12px;color:#000;white-space:pre;transform:scaleX(0.87);transform-origin:100% 50%">83</div>
<div style="left:-147.8px;top:167.8px;width:200px;text-align:right;font-size:8.8px;line-height:12px;color:#000;white-space:pre;transform:scaleX(0.87);transform-origin:100% 50%">2009</div>
<div style="left:55.9px;top:167.8px;font-size:8.8px;line-height:12px;color:#000;white-space:pre;transform:scaleX(0.9);transform-origin:0 50%">1-Jan-09</div>
<div style="left:69.80000000000001px;top:167.8px;width:200px;text-align:right;font-size:8.8px;line-height:12px;color:#000;white-space:pre;transform:scaleX(0.87);transform-origin:100% 50%">610</div>
<div style="left:107.89999999999998px;top:167.8px;width:200px;text-align:right;font-size:8.8px;line-height:12px;color:#000;white-space:pre;transform:scaleX(0.87);transform-origin:100% 50%">610</div>
<div style="left:143.7px;top:167.8px;width:200px;text-align:right;font-size:8.8px;line-height:12px;color:#000;white-space:pre;transform:scaleX(0.87);transform-origin:100% 50%">610</div>
<div style="left:181.89999999999998px;top:167.8px;width:200px;text-align:right;font-size:8.8px;line-height:12px;color:#000;white-space:pre;transform:scaleX(0.87);transform-origin:100% 50%">610</div>
<div style="left:222.0px;top:167.8px;width:200px;text-align:right;font-size:8.8px;line-height:12px;color:#000;white-space:pre;transform:scaleX(0.87);transform-origin:100% 50%">610</div>
<div style="left:259.0px;top:167.8px;width:200px;text-align:right;font-size:8.8px;line-height:12px;color:#000;white-space:pre;transform:scaleX(0.87);transform-origin:100% 50%">610</div>
<div style="left:300.0px;top:167.8px;width:200px;text-align:right;font-size:8.8px;line-height:12px;color:#000;white-space:pre;transform:scaleX(0.87);transform-origin:100% 50%">610</div>
<div style="left:335.79999999999995px;top:167.8px;width:200px;text-align:right;font-size:8.8px;line-height:12px;color:#000;white-space:pre;transform:scaleX(0.87);transform-origin:100% 50%">610</div>
<div style="left:370.79999999999995px;top:167.8px;width:200px;text-align:right;font-size:8.8px;line-height:12px;color:#000;white-space:pre;transform:scaleX(0.87);transform-origin:100% 50%">610</div>
<div style="left:408.9px;top:167.8px;width:200px;text-align:right;font-size:8.8px;line-height:12px;color:#000;white-space:pre;transform:scaleX(0.87);transform-origin:100% 50%">610</div>
<div style="left:447.0px;top:167.8px;width:200px;text-align:right;font-size:8.8px;line-height:12px;color:#000;white-space:pre;transform:scaleX(0.87);transform-origin:100% 50%">610</div>
<div style="left:483.9px;top:167.8px;width:200px;text-align:right;font-size:8.8px;line-height:12px;color:#000;white-space:pre;transform:scaleX(0.87);transform-origin:100% 50%">610</div>
<div style="left:523.6px;top:167.8px;width:200px;text-align:right;font-size:8.8px;line-height:12px;color:#000;white-space:pre;transform:scaleX(0.87);transform-origin:100% 50%">610</div>
<div style="left:561.1px;top:167.8px;width:200px;text-align:right;font-size:8.8px;line-height:12px;color:#000;white-space:pre;transform:scaleX(0.87);transform-origin:100% 50%">610</div>
<div style="left:621.2px;top:167.8px;width:200px;text-align:right;font-size:8.8px;line-height:12px;color:#000;white-space:pre;transform:scaleX(0.87);transform-origin:100% 50%">610</div>
<div style="left:-147.8px;top:180.3px;width:200px;text-align:right;font-size:8.8px;line-height:12px;color:#000;white-space:pre;transform:scaleX(0.87);transform-origin:100% 50%">2009</div>
<div style="left:55.9px;top:180.3px;font-size:8.8px;line-height:12px;color:#000;white-space:pre;transform:scaleX(0.9);transform-origin:0 50%">1-Feb-09</div>
<div style="left:69.80000000000001px;top:180.3px;width:200px;text-align:right;font-size:8.8px;line-height:12px;color:#000;white-space:pre;transform:scaleX(0.87);transform-origin:100% 50%">559</div>
<div style="left:107.89999999999998px;top:180.3px;width:200px;text-align:right;font-size:8.8px;line-height:12px;color:#000;white-space:pre;transform:scaleX(0.87);transform-origin:100% 50%">559</div>
<div style="left:143.7px;top:180.3px;width:200px;text-align:right;font-size:8.8px;line-height:12px;color:#000;white-space:pre;transform:scaleX(0.87);transform-origin:100% 50%">559</div>
<div style="left:181.89999999999998px;top:180.3px;width:200px;text-align:right;font-size:8.8px;line-height:12px;color:#000;white-space:pre;transform:scaleX(0.87);transform-origin:100% 50%">559</div>
<div style="left:222.0px;top:180.3px;width:200px;text-align:right;font-size:8.8px;line-height:12px;color:#000;white-space:pre;transform:scaleX(0.87);transform-origin:100% 50%">559</div>
<div style="left:259.0px;top:180.3px;width:200px;text-align:right;font-size:8.8px;line-height:12px;color:#000;white-space:pre;transform:scaleX(0.87);transform-origin:100% 50%">559</div>
<div style="left:300.0px;top:180.3px;width:200px;text-align:right;font-size:8.8px;line-height:12px;color:#000;white-space:pre;transform:scaleX(0.87);transform-origin:100% 50%">559</div>
<div style="left:335.79999999999995px;top:180.3px;width:200px;text-align:right;font-size:8.8px;line-height:12px;color:#000;white-space:pre;transform:scaleX(0.87);transform-origin:100% 50%">559</div>
<div style="left:370.79999999999995px;top:180.3px;width:200px;text-align:right;font-size:8.8px;line-height:12px;color:#000;white-space:pre;transform:scaleX(0.87);transform-origin:100% 50%">559</div>
<div style="left:408.9px;top:180.3px;width:200px;text-align:right;font-size:8.8px;line-height:12px;color:#000;white-space:pre;transform:scaleX(0.87);transform-origin:100% 50%">559</div>
<div style="left:447.0px;top:180.3px;width:200px;text-align:right;font-size:8.8px;line-height:12px;color:#000;white-space:pre;transform:scaleX(0.87);transform-origin:100% 50%">559</div>
<div style="left:483.9px;top:180.3px;width:200px;text-align:right;font-size:8.8px;line-height:12px;color:#000;white-space:pre;transform:scaleX(0.87);transform-origin:100% 50%">559</div>
<div style="left:523.6px;top:180.3px;width:200px;text-align:right;font-size:8.8px;line-height:12px;color:#000;white-space:pre;transform:scaleX(0.87);transform-origin:100% 50%">559</div>
<div style="left:561.1px;top:180.3px;width:200px;text-align:right;font-size:8.8px;line-height:12px;color:#000;white-space:pre;transform:scaleX(0.87);transform-origin:100% 50%">559</div>
<div style="left:621.2px;top:180.3px;width:200px;text-align:right;font-size:8.8px;line-height:12px;color:#000;white-space:pre;transform:scaleX(0.87);transform-origin:100% 50%">0</div>
<div style="left:-147.8px;top:192.8px;width:200px;text-align:right;font-size:8.8px;line-height:12px;color:#000;white-space:pre;transform:scaleX(0.87);transform-origin:100% 50%">2009</div>
<div style="left:55.9px;top:192.8px;font-size:8.8px;line-height:12px;color:#000;white-space:pre;transform:scaleX(0.9);transform-origin:0 50%">1-Mar-09</div>
<div style="left:69.80000000000001px;top:192.8px;width:200px;text-align:right;font-size:8.8px;line-height:12px;color:#000;white-space:pre;transform:scaleX(0.87);transform-origin:100% 50%">421</div>
<div style="left:107.89999999999998px;top:192.8px;width:200px;text-align:right;font-size:8.8px;line-height:12px;color:#000;white-space:pre;transform:scaleX(0.87);transform-origin:100% 50%">421</div>
<div style="left:143.7px;top:192.8px;width:200px;text-align:right;font-size:8.8px;line-height:12px;color:#000;white-space:pre;transform:scaleX(0.87);transform-origin:100% 50%">421</div>
<div style="left:181.89999999999998px;top:192.8px;width:200px;text-align:right;font-size:8.8px;line-height:12px;color:#000;white-space:pre;transform:scaleX(0.87);transform-origin:100% 50%">421</div>
<div style="left:222.0px;top:192.8px;width:200px;text-align:right;font-size:8.8px;line-height:12px;color:#000;white-space:pre;transform:scaleX(0.87);transform-origin:100% 50%">421</div>
<div style="left:259.0px;top:192.8px;width:200px;text-align:right;font-size:8.8px;line-height:12px;color:#000;white-space:pre;transform:scaleX(0.87);transform-origin:100% 50%">421</div>
<div style="left:300.0px;top:192.8px;width:200px;text-align:right;font-size:8.8px;line-height:12px;color:#000;white-space:pre;transform:scaleX(0.87);transform-origin:100% 50%">421</div>
<div style="left:335.79999999999995px;top:192.8px;width:200px;text-align:right;font-size:8.8px;line-height:12px;color:#000;white-space:pre;transform:scaleX(0.87);transform-origin:100% 50%">421</div>
<div style="left:370.79999999999995px;top:192.8px;width:200px;text-align:right;font-size:8.8px;line-height:12px;color:#000;white-space:pre;transform:scaleX(0.87);transform-origin:100% 50%">421</div>
<div style="left:408.9px;top:192.8px;width:200px;text-align:right;font-size:8.8px;line-height:12px;color:#000;white-space:pre;transform:scaleX(0.87);transform-origin:100% 50%">421</div>
<div style="left:447.0px;top:192.8px;width:200px;text-align:right;font-size:8.8px;line-height:12px;color:#000;white-space:pre;transform:scaleX(0.87);transform-origin:100% 50%">421</div>
<div style="left:483.9px;top:192.8px;width:200px;text-align:right;font-size:8.8px;line-height:12px;color:#000;white-space:pre;transform:scaleX(0.87);transform-origin:100% 50%">421</div>
<div style="left:523.6px;top:192.8px;width:200px;text-align:right;font-size:8.8px;line-height:12px;color:#000;white-space:pre;transform:scaleX(0.87);transform-origin:100% 50%">421</div>
<div style="left:561.1px;top:192.8px;width:200px;text-align:right;font-size:8.8px;line-height:12px;color:#000;white-space:pre;transform:scaleX(0.87);transform-origin:100% 50%">0</div>
<div style="left:621.2px;top:192.8px;width:200px;text-align:right;font-size:8.8px;line-height:12px;color:#000;white-space:pre;transform:scaleX(0.87);transform-origin:100% 50%">0</div>
<div style="left:-147.8px;top:205.3px;width:200px;text-align:right;font-size:8.8px;line-height:12px;color:#000;white-space:pre;transform:scaleX(0.87);transform-origin:100% 50%">2009</div>
<div style="left:55.9px;top:205.3px;font-size:8.8px;line-height:12px;color:#000;white-space:pre;transform:scaleX(0.9);transform-origin:0 50%">1-Apr-09</div>
<div style="left:69.80000000000001px;top:205.3px;width:200px;text-align:right;font-size:8.8px;line-height:12px;color:#000;white-space:pre;transform:scaleX(0.87);transform-origin:100% 50%">414</div>
<div style="left:107.89999999999998px;top:205.3px;width:200px;text-align:right;font-size:8.8px;line-height:12px;color:#000;white-space:pre;transform:scaleX(0.87);transform-origin:100% 50%">414</div>
<div style="left:143.7px;top:205.3px;width:200px;text-align:right;font-size:8.8px;line-height:12px;color:#000;white-space:pre;transform:scaleX(0.87);transform-origin:100% 50%">414</div>
<div style="left:181.89999999999998px;top:205.3px;width:200px;text-align:right;font-size:8.8px;line-height:12px;color:#000;white-space:pre;transform:scaleX(0.87);transform-origin:100% 50%">414</div>
<div style="left:222.0px;top:205.3px;width:200px;text-align:right;font-size:8.8px;line-height:12px;color:#000;white-space:pre;transform:scaleX(0.87);transform-origin:100% 50%">414</div>
<div style="left:259.0px;top:205.3px;width:200px;text-align:right;font-size:8.8px;line-height:12px;color:#000;white-space:pre;transform:scaleX(0.87);transform-origin:100% 50%">414</div>
<div style="left:300.0px;top:205.3px;width:200px;text-align:right;font-size:8.8px;line-height:12px;color:#000;white-space:pre;transform:scaleX(0.87);transform-origin:100% 50%">414</div>
<div style="left:335.79999999999995px;top:205.3px;width:200px;text-align:right;font-size:8.8px;line-height:12px;color:#000;white-space:pre;transform:scaleX(0.87);transform-origin:100% 50%">414</div>
<div style="left:370.79999999999995px;top:205.3px;width:200px;text-align:right;font-size:8.8px;line-height:12px;color:#000;white-space:pre;transform:scaleX(0.87);transform-origin:100% 50%">414</div>
<div style="left:408.9px;top:205.3px;width:200px;text-align:right;font-size:8.8px;line-height:12px;color:#000;white-space:pre;transform:scaleX(0.87);transform-origin:100% 50%">414</div>
<div style="left:447.0px;top:205.3px;width:200px;text-align:right;font-size:8.8px;line-height:12px;color:#000;white-space:pre;transform:scaleX(0.87);transform-origin:100% 50%">414</div>
<div style="left:483.9px;top:205.3px;width:200px;text-align:right;font-size:8.8px;line-height:12px;color:#000;white-space:pre;transform:scaleX(0.87);transform-origin:100% 50%">414</div>
<div style="left:523.6px;top:205.3px;width:200px;text-align:right;font-size:8.8px;line-height:12px;color:#000;white-space:pre;transform:scaleX(0.87);transform-origin:100% 50%">0</div>
<div style="left:561.1px;top:205.3px;width:200px;text-align:right;font-size:8.8px;line-height:12px;color:#000;white-space:pre;transform:scaleX(0.87);transform-origin:100% 50%">0</div>
<div style="left:621.2px;top:205.3px;width:200px;text-align:right;font-size:8.8px;line-height:12px;color:#000;white-space:pre;transform:scaleX(0.87);transform-origin:100% 50%">0</div>
<div style="left:-147.8px;top:217.8px;width:200px;text-align:right;font-size:8.8px;line-height:12px;color:#000;white-space:pre;transform:scaleX(0.87);transform-origin:100% 50%">2009</div>
<div style="left:55.9px;top:217.8px;font-size:8.8px;line-height:12px;color:#000;white-space:pre;transform:scaleX(0.9);transform-origin:0 50%">1-May-09</div>
<div style="left:69.80000000000001px;top:217.8px;width:200px;text-align:right;font-size:8.8px;line-height:12px;color:#000;white-space:pre;transform:scaleX(0.87);transform-origin:100% 50%">411</div>
<div style="left:107.89999999999998px;top:217.8px;width:200px;text-align:right;font-size:8.8px;line-height:12px;color:#000;white-space:pre;transform:scaleX(0.87);transform-origin:100% 50%">411</div>
<div style="left:143.7px;top:217.8px;width:200px;text-align:right;font-size:8.8px;line-height:12px;color:#000;white-space:pre;transform:scaleX(0.87);transform-origin:100% 50%">411</div>
<div style="left:181.89999999999998px;top:217.8px;width:200px;text-align:right;font-size:8.8px;line-height:12px;color:#000;white-space:pre;transform:scaleX(0.87);transform-origin:100% 50%">411</div>
<div style="left:222.0px;top:217.8px;width:200px;text-align:right;font-size:8.8px;line-height:12px;color:#000;white-space:pre;transform:scaleX(0.87);transform-origin:100% 50%">411</div>
<div style="left:259.0px;top:217.8px;width:200px;text-align:right;font-size:8.8px;line-height:12px;color:#000;white-space:pre;transform:scaleX(0.87);transform-origin:100% 50%">411</div>
<div style="left:300.0px;top:217.8px;width:200px;text-align:right;font-size:8.8px;line-height:12px;color:#000;white-space:pre;transform:scaleX(0.87);transform-origin:100% 50%">411</div>
<div style="left:335.79999999999995px;top:217.8px;width:200px;text-align:right;font-size:8.8px;line-height:12px;color:#000;white-space:pre;transform:scaleX(0.87);transform-origin:100% 50%">411</div>
<div style="left:370.79999999999995px;top:217.8px;width:200px;text-align:right;font-size:8.8px;line-height:12px;color:#000;white-space:pre;transform:scaleX(0.87);transform-origin:100% 50%">411</div>
<div style="left:408.9px;top:217.8px;width:200px;text-align:right;font-size:8.8px;line-height:12px;color:#000;white-space:pre;transform:scaleX(0.87);transform-origin:100% 50%">411</div>
<div style="left:447.0px;top:217.8px;width:200px;text-align:right;font-size:8.8px;line-height:12px;color:#000;white-space:pre;transform:scaleX(0.87);transform-origin:100% 50%">411</div>
<div style="left:483.9px;top:217.8px;width:200px;text-align:right;font-size:8.8px;line-height:12px;color:#000;white-space:pre;transform:scaleX(0.87);transform-origin:100% 50%">0</div>
<div style="left:523.6px;top:217.8px;width:200px;text-align:right;font-size:8.8px;line-height:12px;color:#000;white-space:pre;transform:scaleX(0.87);transform-origin:100% 50%">0</div>
<div style="left:561.1px;top:217.8px;width:200px;text-align:right;font-size:8.8px;line-height:12px;color:#000;white-space:pre;transform:scaleX(0.87);transform-origin:100% 50%">0</div>
<div style="left:621.2px;top:217.8px;width:200px;text-align:right;font-size:8.8px;line-height:12px;color:#000;white-space:pre;transform:scaleX(0.87);transform-origin:100% 50%">0</div>
<div style="left:-147.8px;top:230.3px;width:200px;text-align:right;font-size:8.8px;line-height:12px;color:#000;white-space:pre;transform:scaleX(0.87);transform-origin:100% 50%">2009</div>
<div style="left:55.9px;top:230.3px;font-size:8.8px;line-height:12px;color:#000;white-space:pre;transform:scaleX(0.9);transform-origin:0 50%">1-Jun-09</div>
<div style="left:69.80000000000001px;top:230.3px;width:200px;text-align:right;font-size:8.8px;line-height:12px;color:#000;white-space:pre;transform:scaleX(0.87);transform-origin:100% 50%">544</div>
<div style="left:107.89999999999998px;top:230.3px;width:200px;text-align:right;font-size:8.8px;line-height:12px;color:#000;white-space:pre;transform:scaleX(0.87);transform-origin:100% 50%">544</div>
<div style="left:143.7px;top:230.3px;width:200px;text-align:right;font-size:8.8px;line-height:12px;color:#000;white-space:pre;transform:scaleX(0.87);transform-origin:100% 50%">544</div>
<div style="left:181.89999999999998px;top:230.3px;width:200px;text-align:right;font-size:8.8px;line-height:12px;color:#000;white-space:pre;transform:scaleX(0.87);transform-origin:100% 50%">544</div>
<div style="left:222.0px;top:230.3px;width:200px;text-align:right;font-size:8.8px;line-height:12px;color:#000;white-space:pre;transform:scaleX(0.87);transform-origin:100% 50%">544</div>
<div style="left:259.0px;top:230.3px;width:200px;text-align:right;font-size:8.8px;line-height:12px;color:#000;white-space:pre;transform:scaleX(0.87);transform-origin:100% 50%">544</div>
<div style="left:300.0px;top:230.3px;width:200px;text-align:right;font-size:8.8px;line-height:12px;color:#000;white-space:pre;transform:scaleX(0.87);transform-origin:100% 50%">544</div>
<div style="left:335.79999999999995px;top:230.3px;width:200px;text-align:right;font-size:8.8px;line-height:12px;color:#000;white-space:pre;transform:scaleX(0.87);transform-origin:100% 50%">544</div>
<div style="left:370.79999999999995px;top:230.3px;width:200px;text-align:right;font-size:8.8px;line-height:12px;color:#000;white-space:pre;transform:scaleX(0.87);transform-origin:100% 50%">544</div>
<div style="left:408.9px;top:230.3px;width:200px;text-align:right;font-size:8.8px;line-height:12px;color:#000;white-space:pre;transform:scaleX(0.87);transform-origin:100% 50%">544</div>
<div style="left:447.0px;top:230.3px;width:200px;text-align:right;font-size:8.8px;line-height:12px;color:#000;white-space:pre;transform:scaleX(0.87);transform-origin:100% 50%">0</div>
<div style="left:483.9px;top:230.3px;width:200px;text-align:right;font-size:8.8px;line-height:12px;color:#000;white-space:pre;transform:scaleX(0.87);transform-origin:100% 50%">0</div>
<div style="left:523.6px;top:230.3px;width:200px;text-align:right;font-size:8.8px;line-height:12px;color:#000;white-space:pre;transform:scaleX(0.87);transform-origin:100% 50%">0</div>
<div style="left:561.1px;top:230.3px;width:200px;text-align:right;font-size:8.8px;line-height:12px;color:#000;white-space:pre;transform:scaleX(0.87);transform-origin:100% 50%">0</div>
<div style="left:621.2px;top:230.3px;width:200px;text-align:right;font-size:8.8px;line-height:12px;color:#000;white-space:pre;transform:scaleX(0.87);transform-origin:100% 50%">0</div>
<div style="left:-147.8px;top:242.8px;width:200px;text-align:right;font-size:8.8px;line-height:12px;color:#000;white-space:pre;transform:scaleX(0.87);transform-origin:100% 50%">2009</div>
<div style="left:55.9px;top:242.8px;font-size:8.8px;line-height:12px;color:#000;white-space:pre;transform:scaleX(0.9);transform-origin:0 50%">1-Jul-09</div>
<div style="left:69.80000000000001px;top:242.8px;width:200px;text-align:right;font-size:8.8px;line-height:12px;color:#000;white-space:pre;transform:scaleX(0.87);transform-origin:100% 50%">585</div>
<div style="left:107.89999999999998px;top:242.8px;width:200px;text-align:right;font-size:8.8px;line-height:12px;color:#000;white-space:pre;transform:scaleX(0.87);transform-origin:100% 50%">585</div>
<div style="left:143.7px;top:242.8px;width:200px;text-align:right;font-size:8.8px;line-height:12px;color:#000;white-space:pre;transform:scaleX(0.87);transform-origin:100% 50%">585</div>
<div style="left:181.89999999999998px;top:242.8px;width:200px;text-align:right;font-size:8.8px;line-height:12px;color:#000;white-space:pre;transform:scaleX(0.87);transform-origin:100% 50%">585</div>
<div style="left:222.0px;top:242.8px;width:200px;text-align:right;font-size:8.8px;line-height:12px;color:#000;white-space:pre;transform:scaleX(0.87);transform-origin:100% 50%">585</div>
<div style="left:259.0px;top:242.8px;width:200px;text-align:right;font-size:8.8px;line-height:12px;color:#000;white-space:pre;transform:scaleX(0.87);transform-origin:100% 50%">585</div>
<div style="left:300.0px;top:242.8px;width:200px;text-align:right;font-size:8.8px;line-height:12px;color:#000;white-space:pre;transform:scaleX(0.87);transform-origin:100% 50%">585</div>
<div style="left:335.79999999999995px;top:242.8px;width:200px;text-align:right;font-size:8.8px;line-height:12px;color:#000;white-space:pre;transform:scaleX(0.87);transform-origin:100% 50%">585</div>
<div style="left:370.79999999999995px;top:242.8px;width:200px;text-align:right;font-size:8.8px;line-height:12px;color:#000;white-space:pre;transform:scaleX(0.87);transform-origin:100% 50%">585</div>
<div style="left:408.9px;top:242.8px;width:200px;text-align:right;font-size:8.8px;line-height:12px;color:#000;white-space:pre;transform:scaleX(0.87);transform-origin:100% 50%">0</div>
<div style="left:447.0px;top:242.8px;width:200px;text-align:right;font-size:8.8px;line-height:12px;color:#000;white-space:pre;transform:scaleX(0.87);transform-origin:100% 50%">0</div>
<div style="left:483.9px;top:242.8px;width:200px;text-align:right;font-size:8.8px;line-height:12px;color:#000;white-space:pre;transform:scaleX(0.87);transform-origin:100% 50%">0</div>
<div style="left:523.6px;top:242.8px;width:200px;text-align:right;font-size:8.8px;line-height:12px;color:#000;white-space:pre;transform:scaleX(0.87);transform-origin:100% 50%">0</div>
<div style="left:561.1px;top:242.8px;width:200px;text-align:right;font-size:8.8px;line-height:12px;color:#000;white-space:pre;transform:scaleX(0.87);transform-origin:100% 50%">0</div>
<div style="left:621.2px;top:242.8px;width:200px;text-align:right;font-size:8.8px;line-height:12px;color:#000;white-space:pre;transform:scaleX(0.87);transform-origin:100% 50%">0</div>
<div style="left:-147.8px;top:255.3px;width:200px;text-align:right;font-size:8.8px;line-height:12px;color:#000;white-space:pre;transform:scaleX(0.87);transform-origin:100% 50%">2009</div>
<div style="left:55.9px;top:255.3px;font-size:8.8px;line-height:12px;color:#000;white-space:pre;transform:scaleX(0.9);transform-origin:0 50%">1-Aug-09</div>
<div style="left:69.80000000000001px;top:255.3px;width:200px;text-align:right;font-size:8.8px;line-height:12px;color:#000;white-space:pre;transform:scaleX(0.87);transform-origin:100% 50%">448</div>
<div style="left:107.89999999999998px;top:255.3px;width:200px;text-align:right;font-size:8.8px;line-height:12px;color:#000;white-space:pre;transform:scaleX(0.87);transform-origin:100% 50%">448</div>
<div style="left:143.7px;top:255.3px;width:200px;text-align:right;font-size:8.8px;line-height:12px;color:#000;white-space:pre;transform:scaleX(0.87);transform-origin:100% 50%">448</div>
<div style="left:181.89999999999998px;top:255.3px;width:200px;text-align:right;font-size:8.8px;line-height:12px;color:#000;white-space:pre;transform:scaleX(0.87);transform-origin:100% 50%">448</div>
<div style="left:222.0px;top:255.3px;width:200px;text-align:right;font-size:8.8px;line-height:12px;color:#000;white-space:pre;transform:scaleX(0.87);transform-origin:100% 50%">448</div>
<div style="left:259.0px;top:255.3px;width:200px;text-align:right;font-size:8.8px;line-height:12px;color:#000;white-space:pre;transform:scaleX(0.87);transform-origin:100% 50%">448</div>
<div style="left:300.0px;top:255.3px;width:200px;text-align:right;font-size:8.8px;line-height:12px;color:#000;white-space:pre;transform:scaleX(0.87);transform-origin:100% 50%">448</div>
<div style="left:335.79999999999995px;top:255.3px;width:200px;text-align:right;font-size:8.8px;line-height:12px;color:#000;white-space:pre;transform:scaleX(0.87);transform-origin:100% 50%">448</div>
<div style="left:370.79999999999995px;top:255.3px;width:200px;text-align:right;font-size:8.8px;line-height:12px;color:#000;white-space:pre;transform:scaleX(0.87);transform-origin:100% 50%">0</div>
<div style="left:408.9px;top:255.3px;width:200px;text-align:right;font-size:8.8px;line-height:12px;color:#000;white-space:pre;transform:scaleX(0.87);transform-origin:100% 50%">0</div>
<div style="left:447.0px;top:255.3px;width:200px;text-align:right;font-size:8.8px;line-height:12px;color:#000;white-space:pre;transform:scaleX(0.87);transform-origin:100% 50%">0</div>
<div style="left:483.9px;top:255.3px;width:200px;text-align:right;font-size:8.8px;line-height:12px;color:#000;white-space:pre;transform:scaleX(0.87);transform-origin:100% 50%">0</div>
<div style="left:523.6px;top:255.3px;width:200px;text-align:right;font-size:8.8px;line-height:12px;color:#000;white-space:pre;transform:scaleX(0.87);transform-origin:100% 50%">0</div>
<div style="left:561.1px;top:255.3px;width:200px;text-align:right;font-size:8.8px;line-height:12px;color:#000;white-space:pre;transform:scaleX(0.87);transform-origin:100% 50%">0</div>
<div style="left:621.2px;top:255.3px;width:200px;text-align:right;font-size:8.8px;line-height:12px;color:#000;white-space:pre;transform:scaleX(0.87);transform-origin:100% 50%">0</div>
<div style="left:-147.8px;top:267.79999999999995px;width:200px;text-align:right;font-size:8.8px;line-height:12px;color:#000;white-space:pre;transform:scaleX(0.87);transform-origin:100% 50%">2009</div>
<div style="left:55.9px;top:267.79999999999995px;font-size:8.8px;line-height:12px;color:#000;white-space:pre;transform:scaleX(0.9);transform-origin:0 50%">1-Sep-09</div>
<div style="left:69.80000000000001px;top:267.79999999999995px;width:200px;text-align:right;font-size:8.8px;line-height:12px;color:#000;white-space:pre;transform:scaleX(0.87);transform-origin:100% 50%">413</div>
<div style="left:107.89999999999998px;top:267.79999999999995px;width:200px;text-align:right;font-size:8.8px;line-height:12px;color:#000;white-space:pre;transform:scaleX(0.87);transform-origin:100% 50%">413</div>
<div style="left:143.7px;top:267.79999999999995px;width:200px;text-align:right;font-size:8.8px;line-height:12px;color:#000;white-space:pre;transform:scaleX(0.87);transform-origin:100% 50%">413</div>
<div style="left:181.89999999999998px;top:267.79999999999995px;width:200px;text-align:right;font-size:8.8px;line-height:12px;color:#000;white-space:pre;transform:scaleX(0.87);transform-origin:100% 50%">413</div>
<div style="left:222.0px;top:267.79999999999995px;width:200px;text-align:right;font-size:8.8px;line-height:12px;color:#000;white-space:pre;transform:scaleX(0.87);transform-origin:100% 50%">413</div>
<div style="left:259.0px;top:267.79999999999995px;width:200px;text-align:right;font-size:8.8px;line-height:12px;color:#000;white-space:pre;transform:scaleX(0.87);transform-origin:100% 50%">413</div>
<div style="left:300.0px;top:267.79999999999995px;width:200px;text-align:right;font-size:8.8px;line-height:12px;color:#000;white-space:pre;transform:scaleX(0.87);transform-origin:100% 50%">413</div>
<div style="left:335.79999999999995px;top:267.79999999999995px;width:200px;text-align:right;font-size:8.8px;line-height:12px;color:#000;white-space:pre;transform:scaleX(0.87);transform-origin:100% 50%">0</div>
<div style="left:370.79999999999995px;top:267.79999999999995px;width:200px;text-align:right;font-size:8.8px;line-height:12px;color:#000;white-space:pre;transform:scaleX(0.87);transform-origin:100% 50%">0</div>
<div style="left:408.9px;top:267.79999999999995px;width:200px;text-align:right;font-size:8.8px;line-height:12px;color:#000;white-space:pre;transform:scaleX(0.87);transform-origin:100% 50%">0</div>
<div style="left:447.0px;top:267.79999999999995px;width:200px;text-align:right;font-size:8.8px;line-height:12px;color:#000;white-space:pre;transform:scaleX(0.87);transform-origin:100% 50%">0</div>
<div style="left:483.9px;top:267.79999999999995px;width:200px;text-align:right;font-size:8.8px;line-height:12px;color:#000;white-space:pre;transform:scaleX(0.87);transform-origin:100% 50%">0</div>
<div style="left:523.6px;top:267.79999999999995px;width:200px;text-align:right;font-size:8.8px;line-height:12px;color:#000;white-space:pre;transform:scaleX(0.87);transform-origin:100% 50%">0</div>
<div style="left:561.1px;top:267.79999999999995px;width:200px;text-align:right;font-size:8.8px;line-height:12px;color:#000;white-space:pre;transform:scaleX(0.87);transform-origin:100% 50%">0</div>
<div style="left:621.2px;top:267.79999999999995px;width:200px;text-align:right;font-size:8.8px;line-height:12px;color:#000;white-space:pre;transform:scaleX(0.87);transform-origin:100% 50%">0</div>
<div style="left:-147.8px;top:280.29999999999995px;width:200px;text-align:right;font-size:8.8px;line-height:12px;color:#000;white-space:pre;transform:scaleX(0.87);transform-origin:100% 50%">2009</div>
<div style="left:55.9px;top:280.29999999999995px;font-size:8.8px;line-height:12px;color:#000;white-space:pre;transform:scaleX(0.9);transform-origin:0 50%">1-Oct-09</div>
<div style="left:69.80000000000001px;top:280.29999999999995px;width:200px;text-align:right;font-size:8.8px;line-height:12px;color:#000;white-space:pre;transform:scaleX(0.87);transform-origin:100% 50%">581</div>
<div style="left:107.89999999999998px;top:280.29999999999995px;width:200px;text-align:right;font-size:8.8px;line-height:12px;color:#000;white-space:pre;transform:scaleX(0.87);transform-origin:100% 50%">581</div>
<div style="left:143.7px;top:280.29999999999995px;width:200px;text-align:right;font-size:8.8px;line-height:12px;color:#000;white-space:pre;transform:scaleX(0.87);transform-origin:100% 50%">581</div>
<div style="left:181.89999999999998px;top:280.29999999999995px;width:200px;text-align:right;font-size:8.8px;line-height:12px;color:#000;white-space:pre;transform:scaleX(0.87);transform-origin:100% 50%">581</div>
<div style="left:222.0px;top:280.29999999999995px;width:200px;text-align:right;font-size:8.8px;line-height:12px;color:#000;white-space:pre;transform:scaleX(0.87);transform-origin:100% 50%">581</div>
<div style="left:259.0px;top:280.29999999999995px;width:200px;text-align:right;font-size:8.8px;line-height:12px;color:#000;white-space:pre;transform:scaleX(0.87);transform-origin:100% 50%">581</div>
<div style="left:300.0px;top:280.29999999999995px;width:200px;text-align:right;font-size:8.8px;line-height:12px;color:#000;white-space:pre;transform:scaleX(0.87);transform-origin:100% 50%">0</div>
<div style="left:335.79999999999995px;top:280.29999999999995px;width:200px;text-align:right;font-size:8.8px;line-height:12px;color:#000;white-space:pre;transform:scaleX(0.87);transform-origin:100% 50%">0</div>
<div style="left:370.79999999999995px;top:280.29999999999995px;width:200px;text-align:right;font-size:8.8px;line-height:12px;color:#000;white-space:pre;transform:scaleX(0.87);transform-origin:100% 50%">0</div>
<div style="left:408.9px;top:280.29999999999995px;width:200px;text-align:right;font-size:8.8px;line-height:12px;color:#000;white-space:pre;transform:scaleX(0.87);transform-origin:100% 50%">0</div>
<div style="left:447.0px;top:280.29999999999995px;width:200px;text-align:right;font-size:8.8px;line-height:12px;color:#000;white-space:pre;transform:scaleX(0.87);transform-origin:100% 50%">0</div>
<div style="left:483.9px;top:280.29999999999995px;width:200px;text-align:right;font-size:8.8px;line-height:12px;color:#000;white-space:pre;transform:scaleX(0.87);transform-origin:100% 50%">0</div>
<div style="left:523.6px;top:280.29999999999995px;width:200px;text-align:right;font-size:8.8px;line-height:12px;color:#000;white-space:pre;transform:scaleX(0.87);transform-origin:100% 50%">0</div>
<div style="left:561.1px;top:280.29999999999995px;width:200px;text-align:right;font-size:8.8px;line-height:12px;color:#000;white-space:pre;transform:scaleX(0.87);transform-origin:100% 50%">0</div>
<div style="left:621.2px;top:280.29999999999995px;width:200px;text-align:right;font-size:8.8px;line-height:12px;color:#000;white-space:pre;transform:scaleX(0.87);transform-origin:100% 50%">0</div>
<div style="left:-147.8px;top:292.79999999999995px;width:200px;text-align:right;font-size:8.8px;line-height:12px;color:#000;white-space:pre;transform:scaleX(0.87);transform-origin:100% 50%">2009</div>
<div style="left:55.9px;top:292.79999999999995px;font-size:8.8px;line-height:12px;color:#000;white-space:pre;transform:scaleX(0.9);transform-origin:0 50%">1-Nov-09</div>
<div style="left:69.80000000000001px;top:292.79999999999995px;width:200px;text-align:right;font-size:8.8px;line-height:12px;color:#000;white-space:pre;transform:scaleX(0.87);transform-origin:100% 50%">686</div>
<div style="left:107.89999999999998px;top:292.79999999999995px;width:200px;text-align:right;font-size:8.8px;line-height:12px;color:#000;white-space:pre;transform:scaleX(0.87);transform-origin:100% 50%">686</div>
<div style="left:143.7px;top:292.79999999999995px;width:200px;text-align:right;font-size:8.8px;line-height:12px;color:#000;white-space:pre;transform:scaleX(0.87);transform-origin:100% 50%">686</div>
<div style="left:181.89999999999998px;top:292.79999999999995px;width:200px;text-align:right;font-size:8.8px;line-height:12px;color:#000;white-space:pre;transform:scaleX(0.87);transform-origin:100% 50%">686</div>
<div style="left:222.0px;top:292.79999999999995px;width:200px;text-align:right;font-size:8.8px;line-height:12px;color:#000;white-space:pre;transform:scaleX(0.87);transform-origin:100% 50%">686</div>
<div style="left:259.0px;top:292.79999999999995px;width:200px;text-align:right;font-size:8.8px;line-height:12px;color:#000;white-space:pre;transform:scaleX(0.87);transform-origin:100% 50%">0</div>
<div style="left:300.0px;top:292.79999999999995px;width:200px;text-align:right;font-size:8.8px;line-height:12px;color:#000;white-space:pre;transform:scaleX(0.87);transform-origin:100% 50%">0</div>
<div style="left:335.79999999999995px;top:292.79999999999995px;width:200px;text-align:right;font-size:8.8px;line-height:12px;color:#000;white-space:pre;transform:scaleX(0.87);transform-origin:100% 50%">0</div>
<div style="left:370.79999999999995px;top:292.79999999999995px;width:200px;text-align:right;font-size:8.8px;line-height:12px;color:#000;white-space:pre;transform:scaleX(0.87);transform-origin:100% 50%">0</div>
<div style="left:408.9px;top:292.79999999999995px;width:200px;text-align:right;font-size:8.8px;line-height:12px;color:#000;white-space:pre;transform:scaleX(0.87);transform-origin:100% 50%">0</div>
<div style="left:447.0px;top:292.79999999999995px;width:200px;text-align:right;font-size:8.8px;line-height:12px;color:#000;white-space:pre;transform:scaleX(0.87);transform-origin:100% 50%">0</div>
<div style="left:483.9px;top:292.79999999999995px;width:200px;text-align:right;font-size:8.8px;line-height:12px;color:#000;white-space:pre;transform:scaleX(0.87);transform-origin:100% 50%">0</div>
<div style="left:523.6px;top:292.79999999999995px;width:200px;text-align:right;font-size:8.8px;line-height:12px;color:#000;white-space:pre;transform:scaleX(0.87);transform-origin:100% 50%">0</div>
<div style="left:561.1px;top:292.79999999999995px;width:200px;text-align:right;font-size:8.8px;line-height:12px;color:#000;white-space:pre;transform:scaleX(0.87);transform-origin:100% 50%">0</div>
<div style="left:621.2px;top:292.79999999999995px;width:200px;text-align:right;font-size:8.8px;line-height:12px;color:#000;white-space:pre;transform:scaleX(0.87);transform-origin:100% 50%">0</div>
<div style="left:-147.8px;top:305.29999999999995px;width:200px;text-align:right;font-size:8.8px;line-height:12px;color:#000;white-space:pre;transform:scaleX(0.87);transform-origin:100% 50%">2009</div>
<div style="left:55.9px;top:305.29999999999995px;font-size:8.8px;line-height:12px;color:#000;white-space:pre;transform:scaleX(0.9);transform-origin:0 50%">1-Dec-09</div>
<div style="left:69.80000000000001px;top:305.29999999999995px;width:200px;text-align:right;font-size:8.8px;line-height:12px;color:#000;white-space:pre;transform:scaleX(0.87);transform-origin:100% 50%">738</div>
<div style="left:107.89999999999998px;top:305.29999999999995px;width:200px;text-align:right;font-size:8.8px;line-height:12px;color:#000;white-space:pre;transform:scaleX(0.87);transform-origin:100% 50%">738</div>
<div style="left:143.7px;top:305.29999999999995px;width:200px;text-align:right;font-size:8.8px;line-height:12px;color:#000;white-space:pre;transform:scaleX(0.87);transform-origin:100% 50%">738</div>
<div style="left:181.89999999999998px;top:305.29999999999995px;width:200px;text-align:right;font-size:8.8px;line-height:12px;color:#000;white-space:pre;transform:scaleX(0.87);transform-origin:100% 50%">738</div>
<div style="left:222.0px;top:305.29999999999995px;width:200px;text-align:right;font-size:8.8px;line-height:12px;color:#000;white-space:pre;transform:scaleX(0.87);transform-origin:100% 50%">0</div>
<div style="left:259.0px;top:305.29999999999995px;width:200px;text-align:right;font-size:8.8px;line-height:12px;color:#000;white-space:pre;transform:scaleX(0.87);transform-origin:100% 50%">0</div>
<div style="left:300.0px;top:305.29999999999995px;width:200px;text-align:right;font-size:8.8px;line-height:12px;color:#000;white-space:pre;transform:scaleX(0.87);transform-origin:100% 50%">0</div>
<div style="left:335.79999999999995px;top:305.29999999999995px;width:200px;text-align:right;font-size:8.8px;line-height:12px;color:#000;white-space:pre;transform:scaleX(0.87);transform-origin:100% 50%">0</div>
<div style="left:370.79999999999995px;top:305.29999999999995px;width:200px;text-align:right;font-size:8.8px;line-height:12px;color:#000;white-space:pre;transform:scaleX(0.87);transform-origin:100% 50%">0</div>
<div style="left:408.9px;top:305.29999999999995px;width:200px;text-align:right;font-size:8.8px;line-height:12px;color:#000;white-space:pre;transform:scaleX(0.87);transform-origin:100% 50%">0</div>
<div style="left:447.0px;top:305.29999999999995px;width:200px;text-align:right;font-size:8.8px;line-height:12px;color:#000;white-space:pre;transform:scaleX(0.87);transform-origin:100% 50%">0</div>
<div style="left:483.9px;top:305.29999999999995px;width:200px;text-align:right;font-size:8.8px;line-height:12px;color:#000;white-space:pre;transform:scaleX(0.87);transform-origin:100% 50%">0</div>
<div style="left:523.6px;top:305.29999999999995px;width:200px;text-align:right;font-size:8.8px;line-height:12px;color:#000;white-space:pre;transform:scaleX(0.87);transform-origin:100% 50%">0</div>
<div style="left:561.1px;top:305.29999999999995px;width:200px;text-align:right;font-size:8.8px;line-height:12px;color:#000;white-space:pre;transform:scaleX(0.87);transform-origin:100% 50%">0</div>
<div style="left:621.2px;top:305.29999999999995px;width:200px;text-align:right;font-size:8.8px;line-height:12px;color:#000;white-space:pre;transform:scaleX(0.87);transform-origin:100% 50%">0</div>
<div style="left:-147.8px;top:317.79999999999995px;width:200px;text-align:right;font-size:8.8px;line-height:12px;color:#000;white-space:pre;transform:scaleX(0.87);transform-origin:100% 50%">2010</div>
<div style="left:55.9px;top:317.79999999999995px;font-size:8.8px;line-height:12px;color:#000;white-space:pre;transform:scaleX(0.9);transform-origin:0 50%">1-Jan-10</div>
<div style="left:69.80000000000001px;top:317.79999999999995px;width:200px;text-align:right;font-size:8.8px;line-height:12px;color:#000;white-space:pre;transform:scaleX(0.87);transform-origin:100% 50%">484</div>
<div style="left:107.89999999999998px;top:317.79999999999995px;width:200px;text-align:right;font-size:8.8px;line-height:12px;color:#000;white-space:pre;transform:scaleX(0.87);transform-origin:100% 50%">484</div>
<div style="left:143.7px;top:317.79999999999995px;width:200px;text-align:right;font-size:8.8px;line-height:12px;color:#000;white-space:pre;transform:scaleX(0.87);transform-origin:100% 50%">484</div>
<div style="left:181.89999999999998px;top:317.79999999999995px;width:200px;text-align:right;font-size:8.8px;line-height:12px;color:#000;white-space:pre;transform:scaleX(0.87);transform-origin:100% 50%">0</div>
<div style="left:222.0px;top:317.79999999999995px;width:200px;text-align:right;font-size:8.8px;line-height:12px;color:#000;white-space:pre;transform:scaleX(0.87);transform-origin:100% 50%">0</div>
<div style="left:259.0px;top:317.79999999999995px;width:200px;text-align:right;font-size:8.8px;line-height:12px;color:#000;white-space:pre;transform:scaleX(0.87);transform-origin:100% 50%">0</div>
<div style="left:300.0px;top:317.79999999999995px;width:200px;text-align:right;font-size:8.8px;line-height:12px;color:#000;white-space:pre;transform:scaleX(0.87);transform-origin:100% 50%">0</div>
<div style="left:335.79999999999995px;top:317.79999999999995px;width:200px;text-align:right;font-size:8.8px;line-height:12px;color:#000;white-space:pre;transform:scaleX(0.87);transform-origin:100% 50%">0</div>
<div style="left:370.79999999999995px;top:317.79999999999995px;width:200px;text-align:right;font-size:8.8px;line-height:12px;color:#000;white-space:pre;transform:scaleX(0.87);transform-origin:100% 50%">0</div>
<div style="left:408.9px;top:317.79999999999995px;width:200px;text-align:right;font-size:8.8px;line-height:12px;color:#000;white-space:pre;transform:scaleX(0.87);transform-origin:100% 50%">0</div>
<div style="left:447.0px;top:317.79999999999995px;width:200px;text-align:right;font-size:8.8px;line-height:12px;color:#000;white-space:pre;transform:scaleX(0.87);transform-origin:100% 50%">0</div>
<div style="left:483.9px;top:317.79999999999995px;width:200px;text-align:right;font-size:8.8px;line-height:12px;color:#000;white-space:pre;transform:scaleX(0.87);transform-origin:100% 50%">0</div>
<div style="left:523.6px;top:317.79999999999995px;width:200px;text-align:right;font-size:8.8px;line-height:12px;color:#000;white-space:pre;transform:scaleX(0.87);transform-origin:100% 50%">0</div>
<div style="left:561.1px;top:317.79999999999995px;width:200px;text-align:right;font-size:8.8px;line-height:12px;color:#000;white-space:pre;transform:scaleX(0.87);transform-origin:100% 50%">0</div>
<div style="left:621.2px;top:317.79999999999995px;width:200px;text-align:right;font-size:8.8px;line-height:12px;color:#000;white-space:pre;transform:scaleX(0.87);transform-origin:100% 50%">0</div>
<div style="left:-147.8px;top:330.29999999999995px;width:200px;text-align:right;font-size:8.8px;line-height:12px;color:#000;white-space:pre;transform:scaleX(0.87);transform-origin:100% 50%">2010</div>
<div style="left:55.9px;top:330.29999999999995px;font-size:8.8px;line-height:12px;color:#000;white-space:pre;transform:scaleX(0.9);transform-origin:0 50%">1-Feb-10</div>
<div style="left:69.80000000000001px;top:330.29999999999995px;width:200px;text-align:right;font-size:8.8px;line-height:12px;color:#000;white-space:pre;transform:scaleX(0.87);transform-origin:100% 50%">381</div>
<div style="left:107.89999999999998px;top:330.29999999999995px;width:200px;text-align:right;font-size:8.8px;line-height:12px;color:#000;white-space:pre;transform:scaleX(0.87);transform-origin:100% 50%">381</div>
<div style="left:143.7px;top:330.29999999999995px;width:200px;text-align:right;font-size:8.8px;line-height:12px;color:#000;white-space:pre;transform:scaleX(0.87);transform-origin:100% 50%">0</div>
<div style="left:181.89999999999998px;top:330.29999999999995px;width:200px;text-align:right;font-size:8.8px;line-height:12px;color:#000;white-space:pre;transform:scaleX(0.87);transform-origin:100% 50%">0</div>
<div style="left:222.0px;top:330.29999999999995px;width:200px;text-align:right;font-size:8.8px;line-height:12px;color:#000;white-space:pre;transform:scaleX(0.87);transform-origin:100% 50%">0</div>
<div style="left:259.0px;top:330.29999999999995px;width:200px;text-align:right;font-size:8.8px;line-height:12px;color:#000;white-space:pre;transform:scaleX(0.87);transform-origin:100% 50%">0</div>
<div style="left:300.0px;top:330.29999999999995px;width:200px;text-align:right;font-size:8.8px;line-height:12px;color:#000;white-space:pre;transform:scaleX(0.87);transform-origin:100% 50%">0</div>
<div style="left:335.79999999999995px;top:330.29999999999995px;width:200px;text-align:right;font-size:8.8px;line-height:12px;color:#000;white-space:pre;transform:scaleX(0.87);transform-origin:100% 50%">0</div>
<div style="left:370.79999999999995px;top:330.29999999999995px;width:200px;text-align:right;font-size:8.8px;line-height:12px;color:#000;white-space:pre;transform:scaleX(0.87);transform-origin:100% 50%">0</div>
<div style="left:408.9px;top:330.29999999999995px;width:200px;text-align:right;font-size:8.8px;line-height:12px;color:#000;white-space:pre;transform:scaleX(0.87);transform-origin:100% 50%">0</div>
<div style="left:447.0px;top:330.29999999999995px;width:200px;text-align:right;font-size:8.8px;line-height:12px;color:#000;white-space:pre;transform:scaleX(0.87);transform-origin:100% 50%">0</div>
<div style="left:483.9px;top:330.29999999999995px;width:200px;text-align:right;font-size:8.8px;line-height:12px;color:#000;white-space:pre;transform:scaleX(0.87);transform-origin:100% 50%">0</div>
<div style="left:523.6px;top:330.29999999999995px;width:200px;text-align:right;font-size:8.8px;line-height:12px;color:#000;white-space:pre;transform:scaleX(0.87);transform-origin:100% 50%">0</div>
<div style="left:561.1px;top:330.29999999999995px;width:200px;text-align:right;font-size:8.8px;line-height:12px;color:#000;white-space:pre;transform:scaleX(0.87);transform-origin:100% 50%">0</div>
<div style="left:621.2px;top:330.29999999999995px;width:200px;text-align:right;font-size:8.8px;line-height:12px;color:#000;white-space:pre;transform:scaleX(0.87);transform-origin:100% 50%">0</div>
<div style="left:-147.8px;top:342.79999999999995px;width:200px;text-align:right;font-size:8.8px;line-height:12px;color:#000;white-space:pre;transform:scaleX(0.87);transform-origin:100% 50%">2010</div>
<div style="left:55.9px;top:342.79999999999995px;font-size:8.8px;line-height:12px;color:#000;white-space:pre;transform:scaleX(0.9);transform-origin:0 50%">1-Mar-10</div>
<div style="left:69.80000000000001px;top:342.79999999999995px;width:200px;text-align:right;font-size:8.8px;line-height:12px;color:#000;white-space:pre;transform:scaleX(0.87);transform-origin:100% 50%">394</div>
<div style="left:107.89999999999998px;top:342.79999999999995px;width:200px;text-align:right;font-size:8.8px;line-height:12px;color:#000;white-space:pre;transform:scaleX(0.87);transform-origin:100% 50%">0</div>
<div style="left:143.7px;top:342.79999999999995px;width:200px;text-align:right;font-size:8.8px;line-height:12px;color:#000;white-space:pre;transform:scaleX(0.87);transform-origin:100% 50%">0</div>
<div style="left:181.89999999999998px;top:342.79999999999995px;width:200px;text-align:right;font-size:8.8px;line-height:12px;color:#000;white-space:pre;transform:scaleX(0.87);transform-origin:100% 50%">0</div>
<div style="left:222.0px;top:342.79999999999995px;width:200px;text-align:right;font-size:8.8px;line-height:12px;color:#000;white-space:pre;transform:scaleX(0.87);transform-origin:100% 50%">0</div>
<div style="left:259.0px;top:342.79999999999995px;width:200px;text-align:right;font-size:8.8px;line-height:12px;color:#000;white-space:pre;transform:scaleX(0.87);transform-origin:100% 50%">0</div>
<div style="left:300.0px;top:342.79999999999995px;width:200px;text-align:right;font-size:8.8px;line-height:12px;color:#000;white-space:pre;transform:scaleX(0.87);transform-origin:100% 50%">0</div>
<div style="left:335.79999999999995px;top:342.79999999999995px;width:200px;text-align:right;font-size:8.8px;line-height:12px;color:#000;white-space:pre;transform:scaleX(0.87);transform-origin:100% 50%">0</div>
<div style="left:370.79999999999995px;top:342.79999999999995px;width:200px;text-align:right;font-size:8.8px;line-height:12px;color:#000;white-space:pre;transform:scaleX(0.87);transform-origin:100% 50%">0</div>
<div style="left:408.9px;top:342.79999999999995px;width:200px;text-align:right;font-size:8.8px;line-height:12px;color:#000;white-space:pre;transform:scaleX(0.87);transform-origin:100% 50%">0</div>
<div style="left:447.0px;top:342.79999999999995px;width:200px;text-align:right;font-size:8.8px;line-height:12px;color:#000;white-space:pre;transform:scaleX(0.87);transform-origin:100% 50%">0</div>
<div style="left:483.9px;top:342.79999999999995px;width:200px;text-align:right;font-size:8.8px;line-height:12px;color:#000;white-space:pre;transform:scaleX(0.87);transform-origin:100% 50%">0</div>
<div style="left:523.6px;top:342.79999999999995px;width:200px;text-align:right;font-size:8.8px;line-height:12px;color:#000;white-space:pre;transform:scaleX(0.87);transform-origin:100% 50%">0</div>
<div style="left:561.1px;top:342.79999999999995px;width:200px;text-align:right;font-size:8.8px;line-height:12px;color:#000;white-space:pre;transform:scaleX(0.87);transform-origin:100% 50%">0</div>
<div style="left:621.2px;top:342.79999999999995px;width:200px;text-align:right;font-size:8.8px;line-height:12px;color:#000;white-space:pre;transform:scaleX(0.87);transform-origin:100% 50%">0</div>
<div style="left:-147.8px;top:355.29999999999995px;width:200px;text-align:right;font-size:8.8px;line-height:12px;color:#000;white-space:pre;transform:scaleX(0.87);transform-origin:100% 50%">2010</div>
<div style="left:55.9px;top:355.29999999999995px;font-size:8.8px;line-height:12px;color:#000;white-space:pre;transform:scaleX(0.9);transform-origin:0 50%">1-Apr-10</div>
<div style="left:69.80000000000001px;top:355.29999999999995px;width:200px;text-align:right;font-size:8.8px;line-height:12px;color:#000;white-space:pre;transform:scaleX(0.87);transform-origin:100% 50%">349</div>
<div style="left:107.89999999999998px;top:355.29999999999995px;width:200px;text-align:right;font-size:8.8px;line-height:12px;color:#000;white-space:pre;transform:scaleX(0.87);transform-origin:100% 50%">0</div>
<div style="left:143.7px;top:355.29999999999995px;width:200px;text-align:right;font-size:8.8px;line-height:12px;color:#000;white-space:pre;transform:scaleX(0.87);transform-origin:100% 50%">0</div>
<div style="left:181.89999999999998px;top:355.29999999999995px;width:200px;text-align:right;font-size:8.8px;line-height:12px;color:#000;white-space:pre;transform:scaleX(0.87);transform-origin:100% 50%">0</div>
<div style="left:222.0px;top:355.29999999999995px;width:200px;text-align:right;font-size:8.8px;line-height:12px;color:#000;white-space:pre;transform:scaleX(0.87);transform-origin:100% 50%">0</div>
<div style="left:259.0px;top:355.29999999999995px;width:200px;text-align:right;font-size:8.8px;line-height:12px;color:#000;white-space:pre;transform:scaleX(0.87);transform-origin:100% 50%">0</div>
<div style="left:300.0px;top:355.29999999999995px;width:200px;text-align:right;font-size:8.8px;line-height:12px;color:#000;white-space:pre;transform:scaleX(0.87);transform-origin:100% 50%">0</div>
<div style="left:335.79999999999995px;top:355.29999999999995px;width:200px;text-align:right;font-size:8.8px;line-height:12px;color:#000;white-space:pre;transform:scaleX(0.87);transform-origin:100% 50%">0</div>
<div style="left:370.79999999999995px;top:355.29999999999995px;width:200px;text-align:right;font-size:8.8px;line-height:12px;color:#000;white-space:pre;transform:scaleX(0.87);transform-origin:100% 50%">0</div>
<div style="left:408.9px;top:355.29999999999995px;width:200px;text-align:right;font-size:8.8px;line-height:12px;color:#000;white-space:pre;transform:scaleX(0.87);transform-origin:100% 50%">0</div>
<div style="left:447.0px;top:355.29999999999995px;width:200px;text-align:right;font-size:8.8px;line-height:12px;color:#000;white-space:pre;transform:scaleX(0.87);transform-origin:100% 50%">0</div>
<div style="left:483.9px;top:355.29999999999995px;width:200px;text-align:right;font-size:8.8px;line-height:12px;color:#000;white-space:pre;transform:scaleX(0.87);transform-origin:100% 50%">0</div>
<div style="left:523.6px;top:355.29999999999995px;width:200px;text-align:right;font-size:8.8px;line-height:12px;color:#000;white-space:pre;transform:scaleX(0.87);transform-origin:100% 50%">0</div>
<div style="left:561.1px;top:355.29999999999995px;width:200px;text-align:right;font-size:8.8px;line-height:12px;color:#000;white-space:pre;transform:scaleX(0.87);transform-origin:100% 50%">0</div>
<div style="left:621.2px;top:355.29999999999995px;width:200px;text-align:right;font-size:8.8px;line-height:12px;color:#000;white-space:pre;transform:scaleX(0.87);transform-origin:100% 50%">0</div>
<div style="left:-147.8px;top:367.79999999999995px;width:200px;text-align:right;font-size:8.8px;line-height:12px;color:#000;white-space:pre;transform:scaleX(0.87);transform-origin:100% 50%">2010</div>
<div style="left:55.9px;top:367.79999999999995px;font-size:8.8px;line-height:12px;color:#000;white-space:pre;transform:scaleX(0.9);transform-origin:0 50%">1-May-10</div>
<div style="left:69.80000000000001px;top:367.79999999999995px;width:200px;text-align:right;font-size:8.8px;line-height:12px;color:#000;white-space:pre;transform:scaleX(0.87);transform-origin:100% 50%">320</div>
<div style="left:107.89999999999998px;top:367.79999999999995px;width:200px;text-align:right;font-size:8.8px;line-height:12px;color:#000;white-space:pre;transform:scaleX(0.87);transform-origin:100% 50%">0</div>
<div style="left:143.7px;top:367.79999999999995px;width:200px;text-align:right;font-size:8.8px;line-height:12px;color:#000;white-space:pre;transform:scaleX(0.87);transform-origin:100% 50%">0</div>
<div style="left:181.89999999999998px;top:367.79999999999995px;width:200px;text-align:right;font-size:8.8px;line-height:12px;color:#000;white-space:pre;transform:scaleX(0.87);transform-origin:100% 50%">0</div>
<div style="left:222.0px;top:367.79999999999995px;width:200px;text-align:right;font-size:8.8px;line-height:12px;color:#000;white-space:pre;transform:scaleX(0.87);transform-origin:100% 50%">0</div>
<div style="left:259.0px;top:367.79999999999995px;width:200px;text-align:right;font-size:8.8px;line-height:12px;color:#000;white-space:pre;transform:scaleX(0.87);transform-origin:100% 50%">0</div>
<div style="left:300.0px;top:367.79999999999995px;width:200px;text-align:right;font-size:8.8px;line-height:12px;color:#000;white-space:pre;transform:scaleX(0.87);transform-origin:100% 50%">0</div>
<div style="left:335.79999999999995px;top:367.79999999999995px;width:200px;text-align:right;font-size:8.8px;line-height:12px;color:#000;white-space:pre;transform:scaleX(0.87);transform-origin:100% 50%">0</div>
<div style="left:370.79999999999995px;top:367.79999999999995px;width:200px;text-align:right;font-size:8.8px;line-height:12px;color:#000;white-space:pre;transform:scaleX(0.87);transform-origin:100% 50%">0</div>
<div style="left:408.9px;top:367.79999999999995px;width:200px;text-align:right;font-size:8.8px;line-height:12px;color:#000;white-space:pre;transform:scaleX(0.87);transform-origin:100% 50%">0</div>
<div style="left:447.0px;top:367.79999999999995px;width:200px;text-align:right;font-size:8.8px;line-height:12px;color:#000;white-space:pre;transform:scaleX(0.87);transform-origin:100% 50%">0</div>
<div style="left:483.9px;top:367.79999999999995px;width:200px;text-align:right;font-size:8.8px;line-height:12px;color:#000;white-space:pre;transform:scaleX(0.87);transform-origin:100% 50%">0</div>
<div style="left:523.6px;top:367.79999999999995px;width:200px;text-align:right;font-size:8.8px;line-height:12px;color:#000;white-space:pre;transform:scaleX(0.87);transform-origin:100% 50%">0</div>
<div style="left:561.1px;top:367.79999999999995px;width:200px;text-align:right;font-size:8.8px;line-height:12px;color:#000;white-space:pre;transform:scaleX(0.87);transform-origin:100% 50%">0</div>
<div style="left:621.2px;top:367.79999999999995px;width:200px;text-align:right;font-size:8.8px;line-height:12px;color:#000;white-space:pre;transform:scaleX(0.87);transform-origin:100% 50%">0</div>
<div style="left:-147.8px;top:380.29999999999995px;width:200px;text-align:right;font-size:8.8px;line-height:12px;color:#000;white-space:pre;transform:scaleX(0.87);transform-origin:100% 50%">2010</div>
<div style="left:55.9px;top:380.29999999999995px;font-size:8.8px;line-height:12px;color:#000;white-space:pre;transform:scaleX(0.9);transform-origin:0 50%">1-Jun-10</div>
<div style="left:69.80000000000001px;top:380.29999999999995px;width:200px;text-align:right;font-size:8.8px;line-height:12px;color:#000;white-space:pre;transform:scaleX(0.87);transform-origin:100% 50%">407</div>
<div style="left:107.89999999999998px;top:380.29999999999995px;width:200px;text-align:right;font-size:8.8px;line-height:12px;color:#000;white-space:pre;transform:scaleX(0.87);transform-origin:100% 50%">0</div>
<div style="left:143.7px;top:380.29999999999995px;width:200px;text-align:right;font-size:8.8px;line-height:12px;color:#000;white-space:pre;transform:scaleX(0.87);transform-origin:100% 50%">0</div>
<div style="left:181.89999999999998px;top:380.29999999999995px;width:200px;text-align:right;font-size:8.8px;line-height:12px;color:#000;white-space:pre;transform:scaleX(0.87);transform-origin:100% 50%">0</div>
<div style="left:222.0px;top:380.29999999999995px;width:200px;text-align:right;font-size:8.8px;line-height:12px;color:#000;white-space:pre;transform:scaleX(0.87);transform-origin:100% 50%">0</div>
<div style="left:259.0px;top:380.29999999999995px;width:200px;text-align:right;font-size:8.8px;line-height:12px;color:#000;white-space:pre;transform:scaleX(0.87);transform-origin:100% 50%">0</div>
<div style="left:300.0px;top:380.29999999999995px;width:200px;text-align:right;font-size:8.8px;line-height:12px;color:#000;white-space:pre;transform:scaleX(0.87);transform-origin:100% 50%">0</div>
<div style="left:335.79999999999995px;top:380.29999999999995px;width:200px;text-align:right;font-size:8.8px;line-height:12px;color:#000;white-space:pre;transform:scaleX(0.87);transform-origin:100% 50%">0</div>
<div style="left:370.79999999999995px;top:380.29999999999995px;width:200px;text-align:right;font-size:8.8px;line-height:12px;color:#000;white-space:pre;transform:scaleX(0.87);transform-origin:100% 50%">0</div>
<div style="left:408.9px;top:380.29999999999995px;width:200px;text-align:right;font-size:8.8px;line-height:12px;color:#000;white-space:pre;transform:scaleX(0.87);transform-origin:100% 50%">0</div>
<div style="left:447.0px;top:380.29999999999995px;width:200px;text-align:right;font-size:8.8px;line-height:12px;color:#000;white-space:pre;transform:scaleX(0.87);transform-origin:100% 50%">0</div>
<div style="left:483.9px;top:380.29999999999995px;width:200px;text-align:right;font-size:8.8px;line-height:12px;color:#000;white-space:pre;transform:scaleX(0.87);transform-origin:100% 50%">0</div>
<div style="left:523.6px;top:380.29999999999995px;width:200px;text-align:right;font-size:8.8px;line-height:12px;color:#000;white-space:pre;transform:scaleX(0.87);transform-origin:100% 50%">0</div>
<div style="left:561.1px;top:380.29999999999995px;width:200px;text-align:right;font-size:8.8px;line-height:12px;color:#000;white-space:pre;transform:scaleX(0.87);transform-origin:100% 50%">0</div>
<div style="left:621.2px;top:380.29999999999995px;width:200px;text-align:right;font-size:8.8px;line-height:12px;color:#000;white-space:pre;transform:scaleX(0.87);transform-origin:100% 50%">0</div>
<div style="left:-147.8px;top:392.79999999999995px;width:200px;text-align:right;font-size:8.8px;line-height:12px;color:#000;white-space:pre;transform:scaleX(0.87);transform-origin:100% 50%">2010</div>
<div style="left:55.9px;top:392.79999999999995px;font-size:8.8px;line-height:12px;color:#000;white-space:pre;transform:scaleX(0.9);transform-origin:0 50%">1-Jul-10</div>
<div style="left:69.80000000000001px;top:392.79999999999995px;width:200px;text-align:right;font-size:8.8px;line-height:12px;color:#000;white-space:pre;transform:scaleX(0.87);transform-origin:100% 50%">437</div>
<div style="left:107.89999999999998px;top:392.79999999999995px;width:200px;text-align:right;font-size:8.8px;line-height:12px;color:#000;white-space:pre;transform:scaleX(0.87);transform-origin:100% 50%">0</div>
<div style="left:143.7px;top:392.79999999999995px;width:200px;text-align:right;font-size:8.8px;line-height:12px;color:#000;white-space:pre;transform:scaleX(0.87);transform-origin:100% 50%">0</div>
<div style="left:181.89999999999998px;top:392.79999999999995px;width:200px;text-align:right;font-size:8.8px;line-height:12px;color:#000;white-space:pre;transform:scaleX(0.87);transform-origin:100% 50%">0</div>
<div style="left:222.0px;top:392.79999999999995px;width:200px;text-align:right;font-size:8.8px;line-height:12px;color:#000;white-space:pre;transform:scaleX(0.87);transform-origin:100% 50%">0</div>
<div style="left:259.0px;top:392.79999999999995px;width:200px;text-align:right;font-size:8.8px;line-height:12px;color:#000;white-space:pre;transform:scaleX(0.87);transform-origin:100% 50%">0</div>
<div style="left:300.0px;top:392.79999999999995px;width:200px;text-align:right;font-size:8.8px;line-height:12px;color:#000;white-space:pre;transform:scaleX(0.87);transform-origin:100% 50%">0</div>
<div style="left:335.79999999999995px;top:392.79999999999995px;width:200px;text-align:right;font-size:8.8px;line-height:12px;color:#000;white-space:pre;transform:scaleX(0.87);transform-origin:100% 50%">0</div>
<div style="left:370.79999999999995px;top:392.79999999999995px;width:200px;text-align:right;font-size:8.8px;line-height:12px;color:#000;white-space:pre;transform:scaleX(0.87);transform-origin:100% 50%">0</div>
<div style="left:408.9px;top:392.79999999999995px;width:200px;text-align:right;font-size:8.8px;line-height:12px;color:#000;white-space:pre;transform:scaleX(0.87);transform-origin:100% 50%">0</div>
<div style="left:447.0px;top:392.79999999999995px;width:200px;text-align:right;font-size:8.8px;line-height:12px;color:#000;white-space:pre;transform:scaleX(0.87);transform-origin:100% 50%">0</div>
<div style="left:483.9px;top:392.79999999999995px;width:200px;text-align:right;font-size:8.8px;line-height:12px;color:#000;white-space:pre;transform:scaleX(0.87);transform-origin:100% 50%">0</div>
<div style="left:523.6px;top:392.79999999999995px;width:200px;text-align:right;font-size:8.8px;line-height:12px;color:#000;white-space:pre;transform:scaleX(0.87);transform-origin:100% 50%">0</div>
<div style="left:561.1px;top:392.79999999999995px;width:200px;text-align:right;font-size:8.8px;line-height:12px;color:#000;white-space:pre;transform:scaleX(0.87);transform-origin:100% 50%">0</div>
<div style="left:621.2px;top:392.79999999999995px;width:200px;text-align:right;font-size:8.8px;line-height:12px;color:#000;white-space:pre;transform:scaleX(0.87);transform-origin:100% 50%">0</div>
<div style="left:-147.8px;top:405.29999999999995px;width:200px;text-align:right;font-size:8.8px;line-height:12px;color:#000;white-space:pre;transform:scaleX(0.87);transform-origin:100% 50%">2010</div>
<div style="left:55.9px;top:405.29999999999995px;font-size:8.8px;line-height:12px;color:#000;white-space:pre;transform:scaleX(0.9);transform-origin:0 50%">1-Aug-10</div>
<div style="left:69.80000000000001px;top:405.29999999999995px;width:200px;text-align:right;font-size:8.8px;line-height:12px;color:#000;white-space:pre;transform:scaleX(0.87);transform-origin:100% 50%">356</div>
<div style="left:107.89999999999998px;top:405.29999999999995px;width:200px;text-align:right;font-size:8.8px;line-height:12px;color:#000;white-space:pre;transform:scaleX(0.87);transform-origin:100% 50%">0</div>
<div style="left:143.7px;top:405.29999999999995px;width:200px;text-align:right;font-size:8.8px;line-height:12px;color:#000;white-space:pre;transform:scaleX(0.87);transform-origin:100% 50%">0</div>
<div style="left:181.89999999999998px;top:405.29999999999995px;width:200px;text-align:right;font-size:8.8px;line-height:12px;color:#000;white-space:pre;transform:scaleX(0.87);transform-origin:100% 50%">0</div>
<div style="left:222.0px;top:405.29999999999995px;width:200px;text-align:right;font-size:8.8px;line-height:12px;color:#000;white-space:pre;transform:scaleX(0.87);transform-origin:100% 50%">0</div>
<div style="left:259.0px;top:405.29999999999995px;width:200px;text-align:right;font-size:8.8px;line-height:12px;color:#000;white-space:pre;transform:scaleX(0.87);transform-origin:100% 50%">0</div>
<div style="left:300.0px;top:405.29999999999995px;width:200px;text-align:right;font-size:8.8px;line-height:12px;color:#000;white-space:pre;transform:scaleX(0.87);transform-origin:100% 50%">0</div>
<div style="left:335.79999999999995px;top:405.29999999999995px;width:200px;text-align:right;font-size:8.8px;line-height:12px;color:#000;white-space:pre;transform:scaleX(0.87);transform-origin:100% 50%">0</div>
<div style="left:370.79999999999995px;top:405.29999999999995px;width:200px;text-align:right;font-size:8.8px;line-height:12px;color:#000;white-space:pre;transform:scaleX(0.87);transform-origin:100% 50%">0</div>
<div style="left:408.9px;top:405.29999999999995px;width:200px;text-align:right;font-size:8.8px;line-height:12px;color:#000;white-space:pre;transform:scaleX(0.87);transform-origin:100% 50%">0</div>
<div style="left:447.0px;top:405.29999999999995px;width:200px;text-align:right;font-size:8.8px;line-height:12px;color:#000;white-space:pre;transform:scaleX(0.87);transform-origin:100% 50%">0</div>
<div style="left:483.9px;top:405.29999999999995px;width:200px;text-align:right;font-size:8.8px;line-height:12px;color:#000;white-space:pre;transform:scaleX(0.87);transform-origin:100% 50%">0</div>
<div style="left:523.6px;top:405.29999999999995px;width:200px;text-align:right;font-size:8.8px;line-height:12px;color:#000;white-space:pre;transform:scaleX(0.87);transform-origin:100% 50%">0</div>
<div style="left:561.1px;top:405.29999999999995px;width:200px;text-align:right;font-size:8.8px;line-height:12px;color:#000;white-space:pre;transform:scaleX(0.87);transform-origin:100% 50%">0</div>
<div style="left:621.2px;top:405.29999999999995px;width:200px;text-align:right;font-size:8.8px;line-height:12px;color:#000;white-space:pre;transform:scaleX(0.87);transform-origin:100% 50%">0</div>
<div style="left:-147.8px;top:417.79999999999995px;width:200px;text-align:right;font-size:8.8px;line-height:12px;color:#000;white-space:pre;transform:scaleX(0.87);transform-origin:100% 50%">2010</div>
<div style="left:55.9px;top:417.79999999999995px;font-size:8.8px;line-height:12px;color:#000;white-space:pre;transform:scaleX(0.9);transform-origin:0 50%">1-Sep-10</div>
<div style="left:69.80000000000001px;top:417.79999999999995px;width:200px;text-align:right;font-size:8.8px;line-height:12px;color:#000;white-space:pre;transform:scaleX(0.87);transform-origin:100% 50%">360</div>
<div style="left:107.89999999999998px;top:417.79999999999995px;width:200px;text-align:right;font-size:8.8px;line-height:12px;color:#000;white-space:pre;transform:scaleX(0.87);transform-origin:100% 50%">0</div>
<div style="left:143.7px;top:417.79999999999995px;width:200px;text-align:right;font-size:8.8px;line-height:12px;color:#000;white-space:pre;transform:scaleX(0.87);transform-origin:100% 50%">0</div>
<div style="left:181.89999999999998px;top:417.79999999999995px;width:200px;text-align:right;font-size:8.8px;line-height:12px;color:#000;white-space:pre;transform:scaleX(0.87);transform-origin:100% 50%">0</div>
<div style="left:222.0px;top:417.79999999999995px;width:200px;text-align:right;font-size:8.8px;line-height:12px;color:#000;white-space:pre;transform:scaleX(0.87);transform-origin:100% 50%">0</div>
<div style="left:259.0px;top:417.79999999999995px;width:200px;text-align:right;font-size:8.8px;line-height:12px;color:#000;white-space:pre;transform:scaleX(0.87);transform-origin:100% 50%">0</div>
<div style="left:300.0px;top:417.79999999999995px;width:200px;text-align:right;font-size:8.8px;line-height:12px;color:#000;white-space:pre;transform:scaleX(0.87);transform-origin:100% 50%">0</div>
<div style="left:335.79999999999995px;top:417.79999999999995px;width:200px;text-align:right;font-size:8.8px;line-height:12px;color:#000;white-space:pre;transform:scaleX(0.87);transform-origin:100% 50%">0</div>
<div style="left:370.79999999999995px;top:417.79999999999995px;width:200px;text-align:right;font-size:8.8px;line-height:12px;color:#000;white-space:pre;transform:scaleX(0.87);transform-origin:100% 50%">0</div>
<div style="left:408.9px;top:417.79999999999995px;width:200px;text-align:right;font-size:8.8px;line-height:12px;color:#000;white-space:pre;transform:scaleX(0.87);transform-origin:100% 50%">0</div>
<div style="left:447.0px;top:417.79999999999995px;width:200px;text-align:right;font-size:8.8px;line-height:12px;color:#000;white-space:pre;transform:scaleX(0.87);transform-origin:100% 50%">0</div>
<div style="left:483.9px;top:417.79999999999995px;width:200px;text-align:right;font-size:8.8px;line-height:12px;color:#000;white-space:pre;transform:scaleX(0.87);transform-origin:100% 50%">0</div>
<div style="left:523.6px;top:417.79999999999995px;width:200px;text-align:right;font-size:8.8px;line-height:12px;color:#000;white-space:pre;transform:scaleX(0.87);transform-origin:100% 50%">0</div>
<div style="left:561.1px;top:417.79999999999995px;width:200px;text-align:right;font-size:8.8px;line-height:12px;color:#000;white-space:pre;transform:scaleX(0.87);transform-origin:100% 50%">0</div>
<div style="left:621.2px;top:417.79999999999995px;width:200px;text-align:right;font-size:8.8px;line-height:12px;color:#000;white-space:pre;transform:scaleX(0.87);transform-origin:100% 50%">0</div>
<div style="left:762.1px;top:403.4px;width:61.10000000000002px;height:14.0px;border:1.5px solid #217346;box-sizing:border-box"></div>
<div style="left:821.4000000000001px;top:415.29999999999995px;width:2.6px;height:2.6px;background:#217346"></div>
<div style="left:837.2px;top:117.3px;width:12.799999999999955px;height:305.4px;background:#fff"></div>
<div style="left:839px;top:127px;width:9px;height:286.7px;background:#e9e9e9"></div>
<div style="left:839px;top:118.3px;width:9px;height:9px;background:#fff;border:1px solid #c6c6c6;box-sizing:border-box"></div>
<svg style="left:840.5px;top:120.5px" width="6" height="5" viewBox="0 0 6 5"><path d="M0.5 4 L3 1 L5.5 4Z" fill="#555"/></svg>
<div style="left:839px;top:127px;width:9px;height:24px;background:#fff;border:1px solid #c6c6c6;box-sizing:border-box"></div>
<div style="left:839px;top:413.6px;width:9px;height:8.5px;background:#fff;border:1px solid #c6c6c6;box-sizing:border-box"></div>
<svg style="left:840.5px;top:415.5px" width="6" height="5" viewBox="0 0 6 5"><path d="M0.5 1 L3 4 L5.5 1Z" fill="#555"/></svg>
<div style="left:0px;top:422.7px;width:850px;height:16.80000000000001px;background:#f3f3f3"></div>
<div style="left:0px;top:422.7px;width:850px;height:0.8px;background:#c6c6c6"></div>
<svg style="left:13px;top:427px" width="26" height="8" viewBox="0 0 26 8"><path d="M5.2 1.8 L2.3 4 L5.2 6.2Z" fill="#217346"/><path d="M20.3 1.8 L23.2 4 L20.3 6.2Z" fill="#c0c0c0"/></svg>
<div style="left:48px;top:423.5px;font-size:8.4px;line-height:14px;color:#555;white-space:pre;font-weight:bold">...</div>
<div style="left:60.6px;top:422.7px;width:58px;height:16.80000000000001px;background:#fff;border-left:1px solid #c6c6c6;border-right:1px solid #c6c6c6;box-sizing:border-box"></div>
<div style="left:60.6px;top:436.8px;width:58px;height:1.2px;background:#217346"></div>
<div style="left:68.4px;top:424.6px;font-size:8.3px;line-height:13px;color:#217346;font-weight:bold;white-space:pre;transform:scaleX(0.945);transform-origin:0 50%">Calculation</div>
<div style="left:126.5px;top:424.5px;font-size:7.9px;line-height:13px;color:#444;white-space:pre;">First</div>
<div style="left:157.8px;top:424.5px;font-size:7.9px;line-height:13px;color:#444;white-space:pre;">Second</div>
<div style="left:200.6px;top:424.5px;font-size:7.9px;line-height:13px;color:#444;white-space:pre;">Third</div>
<div style="left:237.8px;top:424.5px;font-size:7.9px;line-height:13px;color:#444;white-space:pre;">Assumption</div>
<div style="left:298.6px;top:424.5px;font-size:7.9px;line-height:13px;color:#444;white-space:pre;">Simulation</div>
<div style="left:355px;top:424.5px;font-size:7.9px;line-height:13px;color:#444;white-space:pre;">Challenge</div>
<div style="left:150.7px;top:426px;width:0.8px;height:10px;background:#c6c6c6"></div>
<div style="left:193.5px;top:426px;width:0.8px;height:10px;background:#c6c6c6"></div>
<div style="left:228.8px;top:426px;width:0.8px;height:10px;background:#c6c6c6"></div>
<div style="left:289.5px;top:426px;width:0.8px;height:10px;background:#c6c6c6"></div>
<div style="left:346.5px;top:426px;width:0.8px;height:10px;background:#c6c6c6"></div>
<div style="left:398.7px;top:426px;width:0.8px;height:10px;background:#c6c6c6"></div>
<svg style="left:419px;top:425.5px" width="11" height="11" viewBox="0 0 11 11"><circle cx="5.5" cy="5.5" r="4.6" fill="none" stroke="#666" stroke-width="0.9"/><path d="M5.5 2.8V8.2M2.8 5.5H8.2" stroke="#666" stroke-width="0.9"/></svg>
<div style="left:508.5px;top:427px;width:1px;height:1px;background:#999"></div>
<div style="left:508.5px;top:430px;width:1px;height:1px;background:#999"></div>
<div style="left:508.5px;top:433px;width:1px;height:1px;background:#999"></div>
<div style="left:519.4px;top:427.7px;width:316px;height:8.2px;background:#e9e9e9"></div>
<div style="left:519.4px;top:427.7px;width:9px;height:8.2px;background:#fff;border:1px solid #c6c6c6;box-sizing:border-box"></div>
<svg style="left:521.5px;top:429px" width="5" height="6" viewBox="0 0 5 6"><path d="M4 0.5 L1 3 L4 5.5Z" fill="#555"/></svg>
<div style="left:723.5px;top:427.7px;width:25px;height:8.2px;background:#fff;border:1px solid #c6c6c6;box-sizing:border-box"></div>
<div style="left:827.5px;top:427.7px;width:8.5px;height:8.2px;background:#fff;border:1px solid #c6c6c6;box-sizing:border-box"></div>
<svg style="left:829.5px;top:429px" width="5" height="6" viewBox="0 0 5 6"><path d="M1 0.5 L4 3 L1 5.5Z" fill="#555"/></svg>
<div style="left:11.3px;top:142.0px;width:825.0px;height:286.5px;border:2.1px solid #e3151e;box-sizing:border-box"></div>
<div style="left:0px;top:439.5px;width:850px;height:13.5px;background:#217346"></div>
<div style="left:2.8px;top:440.5px;font-size:7.2px;line-height:13px;color:#fff;white-space:pre;transform:scaleX(0.81);transform-origin:0 50%">READY</div>
<div style="left:668.4px;top:439.5px;width:23.5px;height:13.5px;background:#0f5a2e"></div>
<svg style="left:670px;top:440px" width="180" height="13" viewBox="0 0 180 13">
<g fill="none" stroke="#fff" stroke-width="0.8">
<rect x="5.5" y="2.5" width="8" height="8"/><path d="M8.2 2.5V10.5M10.8 2.5V10.5M5.5 5.2H13.5M5.5 7.8H13.5"/>
<rect x="29" y="2.5" width="8" height="8"/><rect x="30.8" y="4.2" width="4.4" height="4.6" stroke-width="0.6"/><path d="M32.3 4.5V8.5M33.7 4.5V8.5" stroke-width="0.5"/>
<rect x="52.5" y="2.5" width="8" height="8"/>
</g>
<rect x="54" y="3" width="2.5" height="4" fill="#fff"/><rect x="57" y="3" width="2" height="3" fill="#fff"/>
<rect x="72" y="6" width="4" height="1" fill="#fff"/>
<rect x="79" y="6.2" width="62" height="0.8" fill="#fff"/>
<rect x="108.5" y="3" width="2.5" height="7" fill="#fff"/>
<path d="M143 6.5H148M145.5 4V9" stroke="#fff" stroke-width="1"/>
</svg>
<div style="left:827.7px;top:440.3px;font-size:7.2px;line-height:13px;color:#fff;white-space:pre;transform:scaleX(0.94);transform-origin:0 50%">100%</div>
</body></html>
